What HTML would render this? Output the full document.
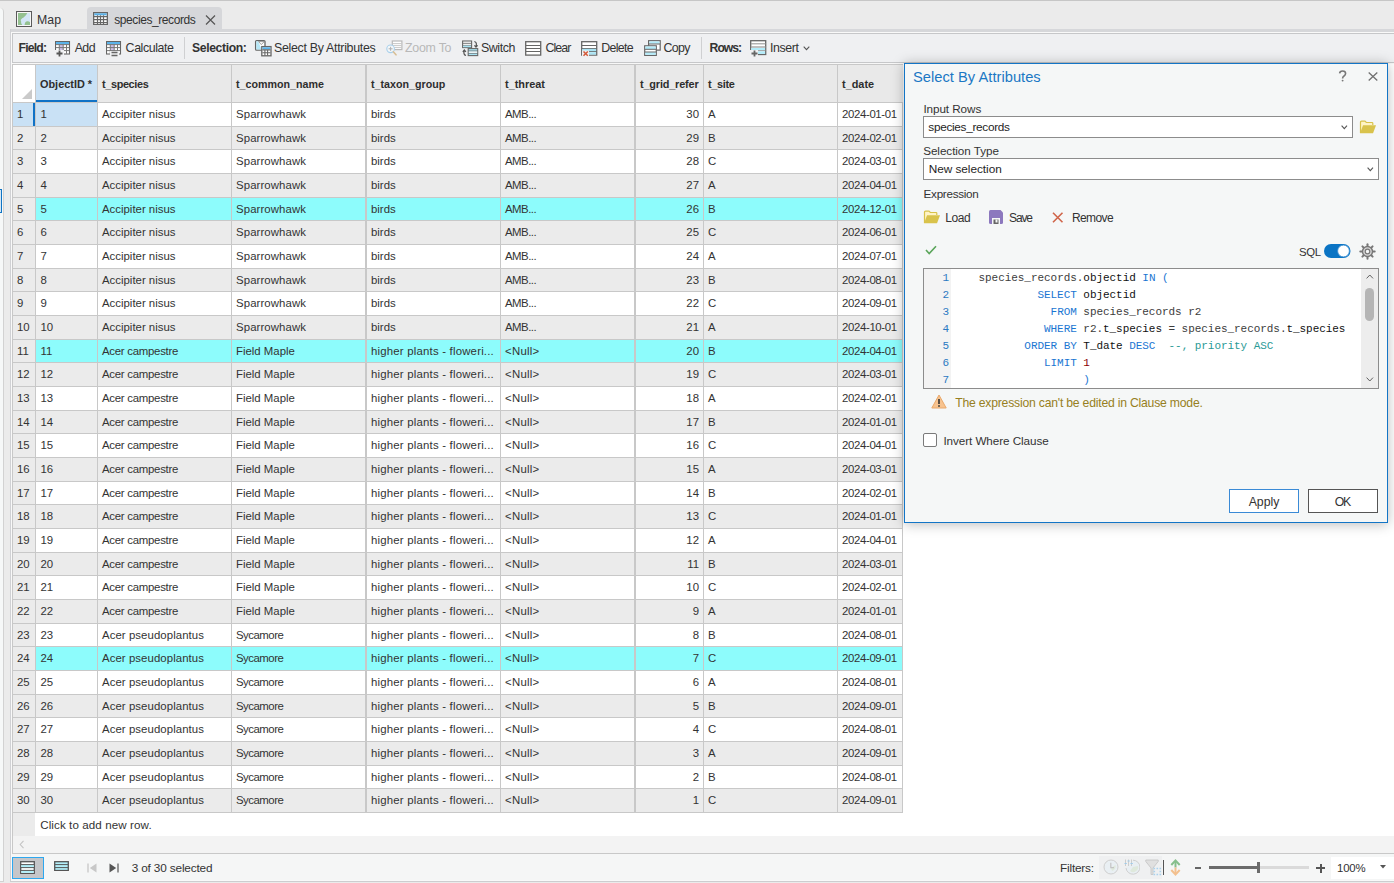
<!DOCTYPE html><html><head><meta charset="utf-8"><style>html,body{margin:0;padding:0;}body{width:1394px;height:883px;overflow:hidden;position:relative;background:#ebebeb;font-family:"Liberation Sans",sans-serif;}</style></head><body>
<div style="position:absolute;left:0px;top:0px;width:1394px;height:1px;background:#c6c6c6"></div>
<div style="position:absolute;left:0px;top:8px;width:3px;height:873px;background:#f6f8f8;border-right:1px solid #d2d2d2;border-bottom:1px solid #d2d2d2;border-top-right-radius:4px"></div>
<div style="position:absolute;left:-3px;top:189px;width:3px;height:22px;background:#d4e6f5;border:1px solid #0f74c4"></div>
<svg style="position:absolute;left:16px;top:11px" width="16" height="16" viewBox="0 0 16 16"><rect x="0.5" y="0.5" width="15" height="15" fill="#fff" stroke="#5a5a5a" stroke-width="1.1"/><rect x="2" y="2" width="12" height="12" fill="#d3e6f6"/><path d="M2 2 H11.2 C10.6 3.6 9.8 4.6 8.6 5.6 C7.6 6.6 6.8 7 6 7.6 C5.2 8.2 4.6 8.8 4.8 9.6 C5.4 10.6 5 11.4 5.2 12.2 L6.2 14 H2 Z" fill="#94c190"/><path d="M8.6 14 C8.8 12.4 9.2 10.6 11 10.3 C12.4 10.1 13.4 10.6 14 11.2 V14 Z" fill="#94c190"/></svg>
<div style="position:absolute;left:37.0px;top:14.19px;font-family:'Liberation Sans', sans-serif;font-size:12.3px;line-height:1;font-weight:400;color:#333;white-space:pre;letter-spacing:0.038px">Map</div>
<div style="position:absolute;left:87px;top:7px;width:135px;height:22px;background:#d6d7da;border-radius:4px 4px 0 0"></div>
<svg style="position:absolute;left:93px;top:12px" width="15" height="13" viewBox="0 0 15 13"><rect x="0.65" y="0.65" width="13.7" height="12" fill="#fff" stroke="#666" stroke-width="1.3"/><rect x="1.3" y="1.3" width="12.4" height="2" fill="#5ab0e6"/><line x1="1" y1="4.6" x2="14" y2="4.6" stroke="#666" stroke-width="1.2"/><line x1="1" y1="7.6" x2="14" y2="7.6" stroke="#666" stroke-width="1.2"/><line x1="1" y1="10.6" x2="14" y2="10.6" stroke="#666" stroke-width="1.2"/><line x1="4.5" y1="3.3" x2="4.5" y2="12.5" stroke="#666" stroke-width="1.2"/><line x1="7.5" y1="3.3" x2="7.5" y2="12.5" stroke="#666" stroke-width="1.2"/><line x1="10.5" y1="3.3" x2="10.5" y2="12.5" stroke="#666" stroke-width="1.2"/></svg>
<div style="position:absolute;left:114.2px;top:14.14px;font-family:'Liberation Sans', sans-serif;font-size:12px;line-height:1;font-weight:400;color:#333;white-space:pre;letter-spacing:-0.412px">species_records</div>
<svg style="position:absolute;left:205px;top:15px" width="11" height="10" viewBox="0 0 11 10"><path d="M1 0.5 L10 9.5 M10 0.5 L1 9.5" stroke="#555" stroke-width="1.2"/></svg>
<div style="position:absolute;left:10px;top:29px;width:1384px;height:3px;background:#d6d7da"></div>
<div style="position:absolute;left:10px;top:29px;width:1px;height:853px;background:#d0d1d4"></div>
<div style="position:absolute;left:11px;top:32px;width:1383px;height:849px;background:#f9f9f9"></div>
<div style="position:absolute;left:10px;top:881px;width:1384px;height:1px;background:#cdcdcf"></div>
<div style="position:absolute;left:12px;top:33px;width:1382px;height:28px;background:#eff0f2;border-top:1px solid #c6c7c9;border-bottom:1px solid #c6c7c9;border-left:1px solid #c6c7c9"></div>
<div style="position:absolute;left:18.5px;top:42.07px;font-family:'Liberation Sans', sans-serif;font-size:12.2px;line-height:1;font-weight:700;color:#333;white-space:pre;letter-spacing:-0.787px">Field:</div>
<svg style="position:absolute;left:55px;top:41px" width="16" height="16" viewBox="0 0 16 16"><rect x="0.5" y="0.5" width="14" height="12.5" fill="#fff" stroke="#666" stroke-width="1.1"/><rect x="1" y="1" width="13" height="2.3" fill="#5cb3ea"/><rect x="4.5" y="3.5" width="3.5" height="9" fill="#cdbfe8"/><line x1="1" y1="3.6" x2="14" y2="3.6" stroke="#777" stroke-width="1"/><line x1="1" y1="6.6" x2="14" y2="6.6" stroke="#777" stroke-width="1"/><line x1="1" y1="9.6" x2="14" y2="9.6" stroke="#777" stroke-width="1"/><line x1="4.3" y1="3.3" x2="4.3" y2="12.8" stroke="#777" stroke-width="1"/><line x1="8.2" y1="3.3" x2="8.2" y2="12.8" stroke="#777" stroke-width="1"/><line x1="11.5" y1="3.3" x2="11.5" y2="12.8" stroke="#777" stroke-width="1"/><rect x="0" y="9" width="9" height="7" fill="#eff0f2"/><path d="M4.5 9.5 V15.5 M1.5 12.5 H7.5" stroke="#555" stroke-width="1.8"/></svg>
<div style="position:absolute;left:74.7px;top:41.90px;font-family:'Liberation Sans', sans-serif;font-size:12.4px;line-height:1;font-weight:400;color:#333;white-space:pre;letter-spacing:-0.580px">Add</div>
<svg style="position:absolute;left:106px;top:41px" width="16" height="16" viewBox="0 0 16 16"><rect x="0.5" y="0.5" width="14" height="12.5" fill="#fff" stroke="#666" stroke-width="1.1"/><rect x="1" y="1" width="13" height="2.3" fill="#5cb3ea"/><rect x="4.5" y="3.5" width="3.5" height="9" fill="#cdbfe8"/><line x1="1" y1="3.6" x2="14" y2="3.6" stroke="#777" stroke-width="1"/><line x1="1" y1="6.6" x2="14" y2="6.6" stroke="#777" stroke-width="1"/><line x1="1" y1="9.6" x2="14" y2="9.6" stroke="#777" stroke-width="1"/><line x1="4.3" y1="3.3" x2="4.3" y2="12.8" stroke="#777" stroke-width="1"/><line x1="8.2" y1="3.3" x2="8.2" y2="12.8" stroke="#777" stroke-width="1"/><line x1="11.5" y1="3.3" x2="11.5" y2="12.8" stroke="#777" stroke-width="1"/><rect x="4" y="10" width="9" height="6" fill="#eff0f2"/><path d="M5.5 11.5 H11.5 M5.5 14.5 H11.5" stroke="#666" stroke-width="1.4"/></svg>
<div style="position:absolute;left:125.6px;top:41.90px;font-family:'Liberation Sans', sans-serif;font-size:12.4px;line-height:1;font-weight:400;color:#333;white-space:pre;letter-spacing:-0.412px">Calculate</div>
<div style="position:absolute;left:184px;top:37px;width:1px;height:22px;background:#cfd0d2"></div>
<div style="position:absolute;left:192.0px;top:42.07px;font-family:'Liberation Sans', sans-serif;font-size:12.2px;line-height:1;font-weight:700;color:#333;white-space:pre;letter-spacing:-0.378px">Selection:</div>
<svg style="position:absolute;left:254px;top:39px" width="18" height="18" viewBox="0 0 18 18"><rect x="1.6" y="1.6" width="9.4" height="9.6" rx="1" fill="#fff" stroke="#666" stroke-width="1.3"/><path d="M2.3 2.3 H4.2 L7.6 10.5 H2.3 Z" fill="#b6e7f7"/><path d="M4.6 2.6 H10.2 L7.3 5.6 Z" fill="#fff" stroke="#888" stroke-width="0.8"/><rect x="7.8" y="7.6" width="9.2" height="9.2" fill="#fff" stroke="#666" stroke-width="1.3"/><rect x="8.45" y="8.25" width="7.9" height="2" fill="#5cb3ea"/><path d="M8.4 10.9 H16.4 M8.4 13.7 H16.4 M10.9 10.5 V16.5 M13.6 10.5 V16.5" stroke="#666" stroke-width="1.1"/></svg>
<div style="position:absolute;left:274.0px;top:41.90px;font-family:'Liberation Sans', sans-serif;font-size:12.4px;line-height:1;font-weight:400;color:#333;white-space:pre;letter-spacing:-0.301px">Select By Attributes</div>
<svg style="position:absolute;left:386px;top:40px" width="17" height="17" viewBox="0 0 17 17"><rect x="6.3" y="1" width="9.6" height="8.6" fill="#fff" stroke="#b9b9b9" stroke-width="1.2"/><path d="M7 3.6 H15.5 M7 5.6 H15.5 M7 7.6 H15.5" stroke="#c2c2c2" stroke-width="0.9"/><circle cx="4.6" cy="8.8" r="3.8" fill="#f4f7f9" stroke="#a8d0ec" stroke-width="1.1"/><path d="M2.6 8.8 H6.6 M4.6 6.8 V10.8" stroke="#b0b0b0" stroke-width="1"/><path d="M7.3 11.8 L10 14.8" stroke="#d8bf96" stroke-width="1.6" stroke-linecap="round"/></svg>
<div style="position:absolute;left:405.0px;top:41.90px;font-family:'Liberation Sans', sans-serif;font-size:12.4px;line-height:1;font-weight:400;color:#b8b8b8;white-space:pre;letter-spacing:-0.252px">Zoom To</div>
<svg style="position:absolute;left:462px;top:40px" width="17" height="17" viewBox="0 0 17 17"><rect x="0.6" y="1" width="9" height="6.6" fill="#fff" stroke="#666" stroke-width="1.1"/><path d="M1 3.3 H9.3 M1 5.4 H9.3" stroke="#666" stroke-width="0.9"/><rect x="1.2" y="5.6" width="7.8" height="1.6" fill="#a9e3f3"/><rect x="6.2" y="8.6" width="9.5" height="7" fill="#a9e3f3" stroke="#666" stroke-width="1.1"/><path d="M6.5 11 H15.5 M6.5 13.2 H15.5" stroke="#666" stroke-width="0.9"/><rect x="6.8" y="11.5" width="8.4" height="1.3" fill="#fff"/><path d="M12.3 1.5 C14.5 2 14.8 4 14 6.5 M12.4 5.3 L14 7 L15.6 5.3" stroke="#555" stroke-width="1.2" fill="none"/><path d="M4 15.5 C1.8 15 1.5 13 2.3 10.5 M0.8 11.8 L2.3 10 L3.9 11.8" stroke="#555" stroke-width="1.2" fill="none"/></svg>
<div style="position:absolute;left:481.0px;top:41.90px;font-family:'Liberation Sans', sans-serif;font-size:12.4px;line-height:1;font-weight:400;color:#333;white-space:pre;letter-spacing:-0.444px">Switch</div>
<svg style="position:absolute;left:525px;top:41px" width="17" height="15" viewBox="0 0 17 15"><rect x="0.7" y="0.7" width="15" height="13.4" fill="#fff" stroke="#666" stroke-width="1.3"/><path d="M1 4.5 H15.5 M1 7.5 H15.5 M1 10.5 H15.5" stroke="#666" stroke-width="1"/></svg>
<div style="position:absolute;left:545.4px;top:41.90px;font-family:'Liberation Sans', sans-serif;font-size:12.4px;line-height:1;font-weight:400;color:#333;white-space:pre;letter-spacing:-0.884px">Clear</div>
<svg style="position:absolute;left:581px;top:41px" width="17" height="16" viewBox="0 0 17 16"><rect x="0.7" y="0.7" width="15" height="13.4" fill="#fff" stroke="#666" stroke-width="1.3"/><path d="M1 4.5 H15.5 M1 7.5 H15.5 M1 10.5 H15.5" stroke="#666" stroke-width="1"/><rect x="1.3" y="7.8" width="13.8" height="2.4" fill="#a9e3f3"/><rect x="1.3" y="11.2" width="13.8" height="2.4" fill="#a9e3f3"/><rect x="1" y="9.5" width="7" height="6.5" fill="#eff0f2"/><path d="M2.5 10.5 L6.8 14.8 M6.8 10.5 L2.5 14.8" stroke="#d45a3a" stroke-width="1.5"/></svg>
<div style="position:absolute;left:601.2px;top:41.90px;font-family:'Liberation Sans', sans-serif;font-size:12.4px;line-height:1;font-weight:400;color:#333;white-space:pre;letter-spacing:-0.670px">Delete</div>
<svg style="position:absolute;left:644px;top:40px" width="17" height="17" viewBox="0 0 17 17"><rect x="4.6" y="0.7" width="11.6" height="9.4" fill="#fff" stroke="#666" stroke-width="1.2"/><rect x="5.3" y="1.4" width="10.2" height="2.3" fill="#b3ecfa"/><path d="M5 4 H16" stroke="#666" stroke-width="1"/><rect x="0.7" y="5.8" width="11.6" height="9.6" fill="#fff" stroke="#666" stroke-width="1.2"/><rect x="1.3" y="6.5" width="10.4" height="2.6" fill="#b3ecfa"/><rect x="1.3" y="12.2" width="10.4" height="2.6" fill="#b3ecfa"/><path d="M1 9.3 H12 M1 12 H12" stroke="#666" stroke-width="1"/></svg>
<div style="position:absolute;left:663.5px;top:41.90px;font-family:'Liberation Sans', sans-serif;font-size:12.4px;line-height:1;font-weight:400;color:#333;white-space:pre;letter-spacing:-0.681px">Copy</div>
<div style="position:absolute;left:701px;top:37px;width:1px;height:22px;background:#cfd0d2"></div>
<div style="position:absolute;left:709.6px;top:42.07px;font-family:'Liberation Sans', sans-serif;font-size:12.2px;line-height:1;font-weight:700;color:#333;white-space:pre;letter-spacing:-1.000px">Rows:</div>
<svg style="position:absolute;left:750px;top:40px" width="17" height="17" viewBox="0 0 17 17"><rect x="0.7" y="0.7" width="15" height="13.8" fill="#fff" stroke="#666" stroke-width="1.3"/><path d="M1 3.8 H15.5" stroke="#999" stroke-width="1.1"/><path d="M1 7 H15.5" stroke="#a4a4a4" stroke-width="1.4"/><rect x="1.3" y="8" width="13.8" height="2.3" fill="#b3ecfa"/><path d="M1 10.7 H15.5" stroke="#999" stroke-width="1"/><rect x="1.3" y="11.3" width="13.8" height="2.6" fill="#b3ecfa"/><rect x="0" y="10" width="8" height="7" fill="#eff0f2"/><path d="M4.5 10.5 V16.5 M1.5 13.5 H7.5" stroke="#666" stroke-width="1.8"/></svg>
<div style="position:absolute;left:770.1px;top:42.30px;font-family:'Liberation Sans', sans-serif;font-size:12.4px;line-height:1;font-weight:400;color:#333;white-space:pre;letter-spacing:-0.422px">Insert</div>
<svg style="position:absolute;left:803px;top:46px" width="7" height="5" viewBox="0 0 7 5"><path d="M0.7 0.7 L3.5 3.6 L6.3 0.7" stroke="#555" stroke-width="1.1" fill="none"/></svg>
<div style="position:absolute;left:12px;top:63px;width:1382px;height:1px;background:#f7f7f7"></div>
<div style="position:absolute;left:12px;top:64px;width:1382px;height:789px;background:#fff"></div>
<div style="position:absolute;left:12px;top:64px;width:1px;height:790px;background:#c8c8c8"></div>
<div style="position:absolute;left:12px;top:64px;width:891px;height:1px;background:#c8c8c8"></div>
<div style="position:absolute;left:13px;top:65px;width:890px;height:37px;background:#e9e9e9"></div>
<div style="position:absolute;left:13px;top:65px;width:22px;height:37px;background:#fff"></div>
<svg style="position:absolute;left:22px;top:89px" width="11" height="11" viewBox="0 0 11 11"><path d="M10 0 L10 10 L0 10 Z" fill="#cacaca"/></svg>
<div style="position:absolute;left:36px;top:65px;width:61px;height:37px;background:#c9e1f5"></div>
<div style="position:absolute;left:36px;top:100px;width:61px;height:2px;background:#1072c6"></div>
<div style="position:absolute;left:40px;top:79.17px;font-family:'Liberation Sans', sans-serif;font-size:10.9px;line-height:1;font-weight:700;color:#2e2e2e;white-space:pre;">ObjectID *</div>
<div style="position:absolute;left:102px;top:79.17px;font-family:'Liberation Sans', sans-serif;font-size:10.9px;line-height:1;font-weight:700;color:#2e2e2e;white-space:pre;letter-spacing:-0.37px">t_species</div>
<div style="position:absolute;left:236px;top:79.34px;font-family:'Liberation Sans', sans-serif;font-size:10.7px;line-height:1;font-weight:700;color:#2e2e2e;white-space:pre;">t_common_name</div>
<div style="position:absolute;left:371px;top:79.34px;font-family:'Liberation Sans', sans-serif;font-size:10.7px;line-height:1;font-weight:700;color:#2e2e2e;white-space:pre;">t_taxon_group</div>
<div style="position:absolute;left:505px;top:79.17px;font-family:'Liberation Sans', sans-serif;font-size:10.9px;line-height:1;font-weight:700;color:#2e2e2e;white-space:pre;">t_threat</div>
<div style="position:absolute;left:640px;top:79.17px;font-family:'Liberation Sans', sans-serif;font-size:10.9px;line-height:1;font-weight:700;color:#2e2e2e;white-space:pre;letter-spacing:-0.17px">t_grid_refer</div>
<div style="position:absolute;left:708px;top:79.17px;font-family:'Liberation Sans', sans-serif;font-size:10.9px;line-height:1;font-weight:700;color:#2e2e2e;white-space:pre;letter-spacing:-0.32px">t_site</div>
<div style="position:absolute;left:842px;top:79.17px;font-family:'Liberation Sans', sans-serif;font-size:10.9px;line-height:1;font-weight:700;color:#2e2e2e;white-space:pre;">t_date</div>
<div style="position:absolute;left:13px;top:102px;width:890px;height:1px;background:#c8c8c8"></div>
<div style="position:absolute;left:36px;top:103px;width:867px;height:23px;background:#fff"></div>
<div style="position:absolute;left:13px;top:103px;width:22px;height:23px;background:#c9e1f5"></div>
<div style="position:absolute;left:33px;top:103px;width:2px;height:23px;background:#1072c6"></div>
<div style="position:absolute;left:36px;top:103px;width:61px;height:23px;background:#c9e1f5"></div>
<div style="position:absolute;left:13px;top:126px;width:890px;height:1px;background:#c8c8c8"></div>
<div style="position:absolute;left:17px;top:108.75px;font-family:'Liberation Sans', sans-serif;font-size:11.4px;line-height:1;font-weight:400;color:#333;white-space:pre;">1</div>
<div style="position:absolute;left:40.5px;top:108.75px;font-family:'Liberation Sans', sans-serif;font-size:11.4px;line-height:1;font-weight:400;color:#333;white-space:pre;">1</div>
<div style="position:absolute;left:102px;top:108.75px;font-family:'Liberation Sans', sans-serif;font-size:11.4px;line-height:1;font-weight:400;color:#333;white-space:pre;letter-spacing:0px">Accipiter nisus</div>
<div style="position:absolute;left:236px;top:108.75px;font-family:'Liberation Sans', sans-serif;font-size:11.4px;line-height:1;font-weight:400;color:#333;white-space:pre;letter-spacing:0.1px">Sparrowhawk</div>
<div style="position:absolute;left:371px;top:108.75px;font-family:'Liberation Sans', sans-serif;font-size:11.4px;line-height:1;font-weight:400;color:#333;white-space:pre;letter-spacing:0px">birds</div>
<div style="position:absolute;left:505px;top:108.75px;font-family:'Liberation Sans', sans-serif;font-size:11.4px;line-height:1;font-weight:400;color:#333;white-space:pre;letter-spacing:-0.5px">AMB...</div>
<div style="position:absolute;right:695px;top:108.75px;font-family:'Liberation Sans', sans-serif;font-size:11.4px;line-height:1;font-weight:400;color:#333;white-space:pre;text-align:right;">30</div>
<div style="position:absolute;left:708px;top:108.75px;font-family:'Liberation Sans', sans-serif;font-size:11.4px;line-height:1;font-weight:400;color:#333;white-space:pre;">A</div>
<div style="position:absolute;left:842px;top:108.75px;font-family:'Liberation Sans', sans-serif;font-size:11.4px;line-height:1;font-weight:400;color:#333;white-space:pre;letter-spacing:-0.35px">2024-01-01</div>
<div style="position:absolute;left:36px;top:127px;width:867px;height:22px;background:#ebebeb"></div>
<div style="position:absolute;left:13px;top:127px;width:22px;height:22px;background:#ebebeb"></div>
<div style="position:absolute;left:13px;top:149px;width:890px;height:1px;background:#c8c8c8"></div>
<div style="position:absolute;left:17px;top:132.75px;font-family:'Liberation Sans', sans-serif;font-size:11.4px;line-height:1;font-weight:400;color:#333;white-space:pre;">2</div>
<div style="position:absolute;left:40.5px;top:132.75px;font-family:'Liberation Sans', sans-serif;font-size:11.4px;line-height:1;font-weight:400;color:#333;white-space:pre;">2</div>
<div style="position:absolute;left:102px;top:132.75px;font-family:'Liberation Sans', sans-serif;font-size:11.4px;line-height:1;font-weight:400;color:#333;white-space:pre;letter-spacing:0px">Accipiter nisus</div>
<div style="position:absolute;left:236px;top:132.75px;font-family:'Liberation Sans', sans-serif;font-size:11.4px;line-height:1;font-weight:400;color:#333;white-space:pre;letter-spacing:0.1px">Sparrowhawk</div>
<div style="position:absolute;left:371px;top:132.75px;font-family:'Liberation Sans', sans-serif;font-size:11.4px;line-height:1;font-weight:400;color:#333;white-space:pre;letter-spacing:0px">birds</div>
<div style="position:absolute;left:505px;top:132.75px;font-family:'Liberation Sans', sans-serif;font-size:11.4px;line-height:1;font-weight:400;color:#333;white-space:pre;letter-spacing:-0.5px">AMB...</div>
<div style="position:absolute;right:695px;top:132.75px;font-family:'Liberation Sans', sans-serif;font-size:11.4px;line-height:1;font-weight:400;color:#333;white-space:pre;text-align:right;">29</div>
<div style="position:absolute;left:708px;top:132.75px;font-family:'Liberation Sans', sans-serif;font-size:11.4px;line-height:1;font-weight:400;color:#333;white-space:pre;">B</div>
<div style="position:absolute;left:842px;top:132.75px;font-family:'Liberation Sans', sans-serif;font-size:11.4px;line-height:1;font-weight:400;color:#333;white-space:pre;letter-spacing:-0.35px">2024-02-01</div>
<div style="position:absolute;left:36px;top:150px;width:867px;height:23px;background:#fff"></div>
<div style="position:absolute;left:13px;top:150px;width:22px;height:23px;background:#ebebeb"></div>
<div style="position:absolute;left:13px;top:173px;width:890px;height:1px;background:#c8c8c8"></div>
<div style="position:absolute;left:17px;top:155.75px;font-family:'Liberation Sans', sans-serif;font-size:11.4px;line-height:1;font-weight:400;color:#333;white-space:pre;">3</div>
<div style="position:absolute;left:40.5px;top:155.75px;font-family:'Liberation Sans', sans-serif;font-size:11.4px;line-height:1;font-weight:400;color:#333;white-space:pre;">3</div>
<div style="position:absolute;left:102px;top:155.75px;font-family:'Liberation Sans', sans-serif;font-size:11.4px;line-height:1;font-weight:400;color:#333;white-space:pre;letter-spacing:0px">Accipiter nisus</div>
<div style="position:absolute;left:236px;top:155.75px;font-family:'Liberation Sans', sans-serif;font-size:11.4px;line-height:1;font-weight:400;color:#333;white-space:pre;letter-spacing:0.1px">Sparrowhawk</div>
<div style="position:absolute;left:371px;top:155.75px;font-family:'Liberation Sans', sans-serif;font-size:11.4px;line-height:1;font-weight:400;color:#333;white-space:pre;letter-spacing:0px">birds</div>
<div style="position:absolute;left:505px;top:155.75px;font-family:'Liberation Sans', sans-serif;font-size:11.4px;line-height:1;font-weight:400;color:#333;white-space:pre;letter-spacing:-0.5px">AMB...</div>
<div style="position:absolute;right:695px;top:155.75px;font-family:'Liberation Sans', sans-serif;font-size:11.4px;line-height:1;font-weight:400;color:#333;white-space:pre;text-align:right;">28</div>
<div style="position:absolute;left:708px;top:155.75px;font-family:'Liberation Sans', sans-serif;font-size:11.4px;line-height:1;font-weight:400;color:#333;white-space:pre;">C</div>
<div style="position:absolute;left:842px;top:155.75px;font-family:'Liberation Sans', sans-serif;font-size:11.4px;line-height:1;font-weight:400;color:#333;white-space:pre;letter-spacing:-0.35px">2024-03-01</div>
<div style="position:absolute;left:36px;top:174px;width:867px;height:23px;background:#ebebeb"></div>
<div style="position:absolute;left:13px;top:174px;width:22px;height:23px;background:#ebebeb"></div>
<div style="position:absolute;left:13px;top:197px;width:890px;height:1px;background:#c8c8c8"></div>
<div style="position:absolute;left:17px;top:179.75px;font-family:'Liberation Sans', sans-serif;font-size:11.4px;line-height:1;font-weight:400;color:#333;white-space:pre;">4</div>
<div style="position:absolute;left:40.5px;top:179.75px;font-family:'Liberation Sans', sans-serif;font-size:11.4px;line-height:1;font-weight:400;color:#333;white-space:pre;">4</div>
<div style="position:absolute;left:102px;top:179.75px;font-family:'Liberation Sans', sans-serif;font-size:11.4px;line-height:1;font-weight:400;color:#333;white-space:pre;letter-spacing:0px">Accipiter nisus</div>
<div style="position:absolute;left:236px;top:179.75px;font-family:'Liberation Sans', sans-serif;font-size:11.4px;line-height:1;font-weight:400;color:#333;white-space:pre;letter-spacing:0.1px">Sparrowhawk</div>
<div style="position:absolute;left:371px;top:179.75px;font-family:'Liberation Sans', sans-serif;font-size:11.4px;line-height:1;font-weight:400;color:#333;white-space:pre;letter-spacing:0px">birds</div>
<div style="position:absolute;left:505px;top:179.75px;font-family:'Liberation Sans', sans-serif;font-size:11.4px;line-height:1;font-weight:400;color:#333;white-space:pre;letter-spacing:-0.5px">AMB...</div>
<div style="position:absolute;right:695px;top:179.75px;font-family:'Liberation Sans', sans-serif;font-size:11.4px;line-height:1;font-weight:400;color:#333;white-space:pre;text-align:right;">27</div>
<div style="position:absolute;left:708px;top:179.75px;font-family:'Liberation Sans', sans-serif;font-size:11.4px;line-height:1;font-weight:400;color:#333;white-space:pre;">A</div>
<div style="position:absolute;left:842px;top:179.75px;font-family:'Liberation Sans', sans-serif;font-size:11.4px;line-height:1;font-weight:400;color:#333;white-space:pre;letter-spacing:-0.35px">2024-04-01</div>
<div style="position:absolute;left:36px;top:198px;width:867px;height:22px;background:#8dfcfc"></div>
<div style="position:absolute;left:13px;top:198px;width:22px;height:22px;background:#ebebeb"></div>
<div style="position:absolute;left:13px;top:220px;width:890px;height:1px;background:#c8c8c8"></div>
<div style="position:absolute;left:17px;top:203.75px;font-family:'Liberation Sans', sans-serif;font-size:11.4px;line-height:1;font-weight:400;color:#333;white-space:pre;">5</div>
<div style="position:absolute;left:40.5px;top:203.75px;font-family:'Liberation Sans', sans-serif;font-size:11.4px;line-height:1;font-weight:400;color:#333;white-space:pre;">5</div>
<div style="position:absolute;left:102px;top:203.75px;font-family:'Liberation Sans', sans-serif;font-size:11.4px;line-height:1;font-weight:400;color:#333;white-space:pre;letter-spacing:0px">Accipiter nisus</div>
<div style="position:absolute;left:236px;top:203.75px;font-family:'Liberation Sans', sans-serif;font-size:11.4px;line-height:1;font-weight:400;color:#333;white-space:pre;letter-spacing:0.1px">Sparrowhawk</div>
<div style="position:absolute;left:371px;top:203.75px;font-family:'Liberation Sans', sans-serif;font-size:11.4px;line-height:1;font-weight:400;color:#333;white-space:pre;letter-spacing:0px">birds</div>
<div style="position:absolute;left:505px;top:203.75px;font-family:'Liberation Sans', sans-serif;font-size:11.4px;line-height:1;font-weight:400;color:#333;white-space:pre;letter-spacing:-0.5px">AMB...</div>
<div style="position:absolute;right:695px;top:203.75px;font-family:'Liberation Sans', sans-serif;font-size:11.4px;line-height:1;font-weight:400;color:#333;white-space:pre;text-align:right;">26</div>
<div style="position:absolute;left:708px;top:203.75px;font-family:'Liberation Sans', sans-serif;font-size:11.4px;line-height:1;font-weight:400;color:#333;white-space:pre;">B</div>
<div style="position:absolute;left:842px;top:203.75px;font-family:'Liberation Sans', sans-serif;font-size:11.4px;line-height:1;font-weight:400;color:#333;white-space:pre;letter-spacing:-0.35px">2024-12-01</div>
<div style="position:absolute;left:36px;top:221px;width:867px;height:23px;background:#ebebeb"></div>
<div style="position:absolute;left:13px;top:221px;width:22px;height:23px;background:#ebebeb"></div>
<div style="position:absolute;left:13px;top:244px;width:890px;height:1px;background:#c8c8c8"></div>
<div style="position:absolute;left:17px;top:226.75px;font-family:'Liberation Sans', sans-serif;font-size:11.4px;line-height:1;font-weight:400;color:#333;white-space:pre;">6</div>
<div style="position:absolute;left:40.5px;top:226.75px;font-family:'Liberation Sans', sans-serif;font-size:11.4px;line-height:1;font-weight:400;color:#333;white-space:pre;">6</div>
<div style="position:absolute;left:102px;top:226.75px;font-family:'Liberation Sans', sans-serif;font-size:11.4px;line-height:1;font-weight:400;color:#333;white-space:pre;letter-spacing:0px">Accipiter nisus</div>
<div style="position:absolute;left:236px;top:226.75px;font-family:'Liberation Sans', sans-serif;font-size:11.4px;line-height:1;font-weight:400;color:#333;white-space:pre;letter-spacing:0.1px">Sparrowhawk</div>
<div style="position:absolute;left:371px;top:226.75px;font-family:'Liberation Sans', sans-serif;font-size:11.4px;line-height:1;font-weight:400;color:#333;white-space:pre;letter-spacing:0px">birds</div>
<div style="position:absolute;left:505px;top:226.75px;font-family:'Liberation Sans', sans-serif;font-size:11.4px;line-height:1;font-weight:400;color:#333;white-space:pre;letter-spacing:-0.5px">AMB...</div>
<div style="position:absolute;right:695px;top:226.75px;font-family:'Liberation Sans', sans-serif;font-size:11.4px;line-height:1;font-weight:400;color:#333;white-space:pre;text-align:right;">25</div>
<div style="position:absolute;left:708px;top:226.75px;font-family:'Liberation Sans', sans-serif;font-size:11.4px;line-height:1;font-weight:400;color:#333;white-space:pre;">C</div>
<div style="position:absolute;left:842px;top:226.75px;font-family:'Liberation Sans', sans-serif;font-size:11.4px;line-height:1;font-weight:400;color:#333;white-space:pre;letter-spacing:-0.35px">2024-06-01</div>
<div style="position:absolute;left:36px;top:245px;width:867px;height:23px;background:#fff"></div>
<div style="position:absolute;left:13px;top:245px;width:22px;height:23px;background:#ebebeb"></div>
<div style="position:absolute;left:13px;top:268px;width:890px;height:1px;background:#c8c8c8"></div>
<div style="position:absolute;left:17px;top:250.75px;font-family:'Liberation Sans', sans-serif;font-size:11.4px;line-height:1;font-weight:400;color:#333;white-space:pre;">7</div>
<div style="position:absolute;left:40.5px;top:250.75px;font-family:'Liberation Sans', sans-serif;font-size:11.4px;line-height:1;font-weight:400;color:#333;white-space:pre;">7</div>
<div style="position:absolute;left:102px;top:250.75px;font-family:'Liberation Sans', sans-serif;font-size:11.4px;line-height:1;font-weight:400;color:#333;white-space:pre;letter-spacing:0px">Accipiter nisus</div>
<div style="position:absolute;left:236px;top:250.75px;font-family:'Liberation Sans', sans-serif;font-size:11.4px;line-height:1;font-weight:400;color:#333;white-space:pre;letter-spacing:0.1px">Sparrowhawk</div>
<div style="position:absolute;left:371px;top:250.75px;font-family:'Liberation Sans', sans-serif;font-size:11.4px;line-height:1;font-weight:400;color:#333;white-space:pre;letter-spacing:0px">birds</div>
<div style="position:absolute;left:505px;top:250.75px;font-family:'Liberation Sans', sans-serif;font-size:11.4px;line-height:1;font-weight:400;color:#333;white-space:pre;letter-spacing:-0.5px">AMB...</div>
<div style="position:absolute;right:695px;top:250.75px;font-family:'Liberation Sans', sans-serif;font-size:11.4px;line-height:1;font-weight:400;color:#333;white-space:pre;text-align:right;">24</div>
<div style="position:absolute;left:708px;top:250.75px;font-family:'Liberation Sans', sans-serif;font-size:11.4px;line-height:1;font-weight:400;color:#333;white-space:pre;">A</div>
<div style="position:absolute;left:842px;top:250.75px;font-family:'Liberation Sans', sans-serif;font-size:11.4px;line-height:1;font-weight:400;color:#333;white-space:pre;letter-spacing:-0.35px">2024-07-01</div>
<div style="position:absolute;left:36px;top:269px;width:867px;height:22px;background:#ebebeb"></div>
<div style="position:absolute;left:13px;top:269px;width:22px;height:22px;background:#ebebeb"></div>
<div style="position:absolute;left:13px;top:291px;width:890px;height:1px;background:#c8c8c8"></div>
<div style="position:absolute;left:17px;top:274.75px;font-family:'Liberation Sans', sans-serif;font-size:11.4px;line-height:1;font-weight:400;color:#333;white-space:pre;">8</div>
<div style="position:absolute;left:40.5px;top:274.75px;font-family:'Liberation Sans', sans-serif;font-size:11.4px;line-height:1;font-weight:400;color:#333;white-space:pre;">8</div>
<div style="position:absolute;left:102px;top:274.75px;font-family:'Liberation Sans', sans-serif;font-size:11.4px;line-height:1;font-weight:400;color:#333;white-space:pre;letter-spacing:0px">Accipiter nisus</div>
<div style="position:absolute;left:236px;top:274.75px;font-family:'Liberation Sans', sans-serif;font-size:11.4px;line-height:1;font-weight:400;color:#333;white-space:pre;letter-spacing:0.1px">Sparrowhawk</div>
<div style="position:absolute;left:371px;top:274.75px;font-family:'Liberation Sans', sans-serif;font-size:11.4px;line-height:1;font-weight:400;color:#333;white-space:pre;letter-spacing:0px">birds</div>
<div style="position:absolute;left:505px;top:274.75px;font-family:'Liberation Sans', sans-serif;font-size:11.4px;line-height:1;font-weight:400;color:#333;white-space:pre;letter-spacing:-0.5px">AMB...</div>
<div style="position:absolute;right:695px;top:274.75px;font-family:'Liberation Sans', sans-serif;font-size:11.4px;line-height:1;font-weight:400;color:#333;white-space:pre;text-align:right;">23</div>
<div style="position:absolute;left:708px;top:274.75px;font-family:'Liberation Sans', sans-serif;font-size:11.4px;line-height:1;font-weight:400;color:#333;white-space:pre;">B</div>
<div style="position:absolute;left:842px;top:274.75px;font-family:'Liberation Sans', sans-serif;font-size:11.4px;line-height:1;font-weight:400;color:#333;white-space:pre;letter-spacing:-0.35px">2024-08-01</div>
<div style="position:absolute;left:36px;top:292px;width:867px;height:23px;background:#fff"></div>
<div style="position:absolute;left:13px;top:292px;width:22px;height:23px;background:#ebebeb"></div>
<div style="position:absolute;left:13px;top:315px;width:890px;height:1px;background:#c8c8c8"></div>
<div style="position:absolute;left:17px;top:297.75px;font-family:'Liberation Sans', sans-serif;font-size:11.4px;line-height:1;font-weight:400;color:#333;white-space:pre;">9</div>
<div style="position:absolute;left:40.5px;top:297.75px;font-family:'Liberation Sans', sans-serif;font-size:11.4px;line-height:1;font-weight:400;color:#333;white-space:pre;">9</div>
<div style="position:absolute;left:102px;top:297.75px;font-family:'Liberation Sans', sans-serif;font-size:11.4px;line-height:1;font-weight:400;color:#333;white-space:pre;letter-spacing:0px">Accipiter nisus</div>
<div style="position:absolute;left:236px;top:297.75px;font-family:'Liberation Sans', sans-serif;font-size:11.4px;line-height:1;font-weight:400;color:#333;white-space:pre;letter-spacing:0.1px">Sparrowhawk</div>
<div style="position:absolute;left:371px;top:297.75px;font-family:'Liberation Sans', sans-serif;font-size:11.4px;line-height:1;font-weight:400;color:#333;white-space:pre;letter-spacing:0px">birds</div>
<div style="position:absolute;left:505px;top:297.75px;font-family:'Liberation Sans', sans-serif;font-size:11.4px;line-height:1;font-weight:400;color:#333;white-space:pre;letter-spacing:-0.5px">AMB...</div>
<div style="position:absolute;right:695px;top:297.75px;font-family:'Liberation Sans', sans-serif;font-size:11.4px;line-height:1;font-weight:400;color:#333;white-space:pre;text-align:right;">22</div>
<div style="position:absolute;left:708px;top:297.75px;font-family:'Liberation Sans', sans-serif;font-size:11.4px;line-height:1;font-weight:400;color:#333;white-space:pre;">C</div>
<div style="position:absolute;left:842px;top:297.75px;font-family:'Liberation Sans', sans-serif;font-size:11.4px;line-height:1;font-weight:400;color:#333;white-space:pre;letter-spacing:-0.35px">2024-09-01</div>
<div style="position:absolute;left:36px;top:316px;width:867px;height:23px;background:#ebebeb"></div>
<div style="position:absolute;left:13px;top:316px;width:22px;height:23px;background:#ebebeb"></div>
<div style="position:absolute;left:13px;top:339px;width:890px;height:1px;background:#c8c8c8"></div>
<div style="position:absolute;left:17px;top:321.75px;font-family:'Liberation Sans', sans-serif;font-size:11.4px;line-height:1;font-weight:400;color:#333;white-space:pre;">10</div>
<div style="position:absolute;left:40.5px;top:321.75px;font-family:'Liberation Sans', sans-serif;font-size:11.4px;line-height:1;font-weight:400;color:#333;white-space:pre;">10</div>
<div style="position:absolute;left:102px;top:321.75px;font-family:'Liberation Sans', sans-serif;font-size:11.4px;line-height:1;font-weight:400;color:#333;white-space:pre;letter-spacing:0px">Accipiter nisus</div>
<div style="position:absolute;left:236px;top:321.75px;font-family:'Liberation Sans', sans-serif;font-size:11.4px;line-height:1;font-weight:400;color:#333;white-space:pre;letter-spacing:0.1px">Sparrowhawk</div>
<div style="position:absolute;left:371px;top:321.75px;font-family:'Liberation Sans', sans-serif;font-size:11.4px;line-height:1;font-weight:400;color:#333;white-space:pre;letter-spacing:0px">birds</div>
<div style="position:absolute;left:505px;top:321.75px;font-family:'Liberation Sans', sans-serif;font-size:11.4px;line-height:1;font-weight:400;color:#333;white-space:pre;letter-spacing:-0.5px">AMB...</div>
<div style="position:absolute;right:695px;top:321.75px;font-family:'Liberation Sans', sans-serif;font-size:11.4px;line-height:1;font-weight:400;color:#333;white-space:pre;text-align:right;">21</div>
<div style="position:absolute;left:708px;top:321.75px;font-family:'Liberation Sans', sans-serif;font-size:11.4px;line-height:1;font-weight:400;color:#333;white-space:pre;">A</div>
<div style="position:absolute;left:842px;top:321.75px;font-family:'Liberation Sans', sans-serif;font-size:11.4px;line-height:1;font-weight:400;color:#333;white-space:pre;letter-spacing:-0.35px">2024-10-01</div>
<div style="position:absolute;left:36px;top:340px;width:867px;height:22px;background:#8dfcfc"></div>
<div style="position:absolute;left:13px;top:340px;width:22px;height:22px;background:#ebebeb"></div>
<div style="position:absolute;left:13px;top:362px;width:890px;height:1px;background:#c8c8c8"></div>
<div style="position:absolute;left:17px;top:345.75px;font-family:'Liberation Sans', sans-serif;font-size:11.4px;line-height:1;font-weight:400;color:#333;white-space:pre;">11</div>
<div style="position:absolute;left:40.5px;top:345.75px;font-family:'Liberation Sans', sans-serif;font-size:11.4px;line-height:1;font-weight:400;color:#333;white-space:pre;">11</div>
<div style="position:absolute;left:102px;top:345.75px;font-family:'Liberation Sans', sans-serif;font-size:11.4px;line-height:1;font-weight:400;color:#333;white-space:pre;letter-spacing:-0.26px">Acer campestre</div>
<div style="position:absolute;left:236px;top:345.75px;font-family:'Liberation Sans', sans-serif;font-size:11.4px;line-height:1;font-weight:400;color:#333;white-space:pre;letter-spacing:0px">Field Maple</div>
<div style="position:absolute;left:371px;top:345.75px;font-family:'Liberation Sans', sans-serif;font-size:11.4px;line-height:1;font-weight:400;color:#333;white-space:pre;letter-spacing:0.2px">higher plants - floweri...</div>
<div style="position:absolute;left:505px;top:345.75px;font-family:'Liberation Sans', sans-serif;font-size:11.4px;line-height:1;font-weight:400;color:#333;white-space:pre;letter-spacing:0.25px">&lt;Null&gt;</div>
<div style="position:absolute;right:695px;top:345.75px;font-family:'Liberation Sans', sans-serif;font-size:11.4px;line-height:1;font-weight:400;color:#333;white-space:pre;text-align:right;">20</div>
<div style="position:absolute;left:708px;top:345.75px;font-family:'Liberation Sans', sans-serif;font-size:11.4px;line-height:1;font-weight:400;color:#333;white-space:pre;">B</div>
<div style="position:absolute;left:842px;top:345.75px;font-family:'Liberation Sans', sans-serif;font-size:11.4px;line-height:1;font-weight:400;color:#333;white-space:pre;letter-spacing:-0.35px">2024-04-01</div>
<div style="position:absolute;left:36px;top:363px;width:867px;height:23px;background:#ebebeb"></div>
<div style="position:absolute;left:13px;top:363px;width:22px;height:23px;background:#ebebeb"></div>
<div style="position:absolute;left:13px;top:386px;width:890px;height:1px;background:#c8c8c8"></div>
<div style="position:absolute;left:17px;top:368.75px;font-family:'Liberation Sans', sans-serif;font-size:11.4px;line-height:1;font-weight:400;color:#333;white-space:pre;">12</div>
<div style="position:absolute;left:40.5px;top:368.75px;font-family:'Liberation Sans', sans-serif;font-size:11.4px;line-height:1;font-weight:400;color:#333;white-space:pre;">12</div>
<div style="position:absolute;left:102px;top:368.75px;font-family:'Liberation Sans', sans-serif;font-size:11.4px;line-height:1;font-weight:400;color:#333;white-space:pre;letter-spacing:-0.26px">Acer campestre</div>
<div style="position:absolute;left:236px;top:368.75px;font-family:'Liberation Sans', sans-serif;font-size:11.4px;line-height:1;font-weight:400;color:#333;white-space:pre;letter-spacing:0px">Field Maple</div>
<div style="position:absolute;left:371px;top:368.75px;font-family:'Liberation Sans', sans-serif;font-size:11.4px;line-height:1;font-weight:400;color:#333;white-space:pre;letter-spacing:0.2px">higher plants - floweri...</div>
<div style="position:absolute;left:505px;top:368.75px;font-family:'Liberation Sans', sans-serif;font-size:11.4px;line-height:1;font-weight:400;color:#333;white-space:pre;letter-spacing:0.25px">&lt;Null&gt;</div>
<div style="position:absolute;right:695px;top:368.75px;font-family:'Liberation Sans', sans-serif;font-size:11.4px;line-height:1;font-weight:400;color:#333;white-space:pre;text-align:right;">19</div>
<div style="position:absolute;left:708px;top:368.75px;font-family:'Liberation Sans', sans-serif;font-size:11.4px;line-height:1;font-weight:400;color:#333;white-space:pre;">C</div>
<div style="position:absolute;left:842px;top:368.75px;font-family:'Liberation Sans', sans-serif;font-size:11.4px;line-height:1;font-weight:400;color:#333;white-space:pre;letter-spacing:-0.35px">2024-03-01</div>
<div style="position:absolute;left:36px;top:387px;width:867px;height:23px;background:#fff"></div>
<div style="position:absolute;left:13px;top:387px;width:22px;height:23px;background:#ebebeb"></div>
<div style="position:absolute;left:13px;top:410px;width:890px;height:1px;background:#c8c8c8"></div>
<div style="position:absolute;left:17px;top:392.75px;font-family:'Liberation Sans', sans-serif;font-size:11.4px;line-height:1;font-weight:400;color:#333;white-space:pre;">13</div>
<div style="position:absolute;left:40.5px;top:392.75px;font-family:'Liberation Sans', sans-serif;font-size:11.4px;line-height:1;font-weight:400;color:#333;white-space:pre;">13</div>
<div style="position:absolute;left:102px;top:392.75px;font-family:'Liberation Sans', sans-serif;font-size:11.4px;line-height:1;font-weight:400;color:#333;white-space:pre;letter-spacing:-0.26px">Acer campestre</div>
<div style="position:absolute;left:236px;top:392.75px;font-family:'Liberation Sans', sans-serif;font-size:11.4px;line-height:1;font-weight:400;color:#333;white-space:pre;letter-spacing:0px">Field Maple</div>
<div style="position:absolute;left:371px;top:392.75px;font-family:'Liberation Sans', sans-serif;font-size:11.4px;line-height:1;font-weight:400;color:#333;white-space:pre;letter-spacing:0.2px">higher plants - floweri...</div>
<div style="position:absolute;left:505px;top:392.75px;font-family:'Liberation Sans', sans-serif;font-size:11.4px;line-height:1;font-weight:400;color:#333;white-space:pre;letter-spacing:0.25px">&lt;Null&gt;</div>
<div style="position:absolute;right:695px;top:392.75px;font-family:'Liberation Sans', sans-serif;font-size:11.4px;line-height:1;font-weight:400;color:#333;white-space:pre;text-align:right;">18</div>
<div style="position:absolute;left:708px;top:392.75px;font-family:'Liberation Sans', sans-serif;font-size:11.4px;line-height:1;font-weight:400;color:#333;white-space:pre;">A</div>
<div style="position:absolute;left:842px;top:392.75px;font-family:'Liberation Sans', sans-serif;font-size:11.4px;line-height:1;font-weight:400;color:#333;white-space:pre;letter-spacing:-0.35px">2024-02-01</div>
<div style="position:absolute;left:36px;top:411px;width:867px;height:22px;background:#ebebeb"></div>
<div style="position:absolute;left:13px;top:411px;width:22px;height:22px;background:#ebebeb"></div>
<div style="position:absolute;left:13px;top:433px;width:890px;height:1px;background:#c8c8c8"></div>
<div style="position:absolute;left:17px;top:416.75px;font-family:'Liberation Sans', sans-serif;font-size:11.4px;line-height:1;font-weight:400;color:#333;white-space:pre;">14</div>
<div style="position:absolute;left:40.5px;top:416.75px;font-family:'Liberation Sans', sans-serif;font-size:11.4px;line-height:1;font-weight:400;color:#333;white-space:pre;">14</div>
<div style="position:absolute;left:102px;top:416.75px;font-family:'Liberation Sans', sans-serif;font-size:11.4px;line-height:1;font-weight:400;color:#333;white-space:pre;letter-spacing:-0.26px">Acer campestre</div>
<div style="position:absolute;left:236px;top:416.75px;font-family:'Liberation Sans', sans-serif;font-size:11.4px;line-height:1;font-weight:400;color:#333;white-space:pre;letter-spacing:0px">Field Maple</div>
<div style="position:absolute;left:371px;top:416.75px;font-family:'Liberation Sans', sans-serif;font-size:11.4px;line-height:1;font-weight:400;color:#333;white-space:pre;letter-spacing:0.2px">higher plants - floweri...</div>
<div style="position:absolute;left:505px;top:416.75px;font-family:'Liberation Sans', sans-serif;font-size:11.4px;line-height:1;font-weight:400;color:#333;white-space:pre;letter-spacing:0.25px">&lt;Null&gt;</div>
<div style="position:absolute;right:695px;top:416.75px;font-family:'Liberation Sans', sans-serif;font-size:11.4px;line-height:1;font-weight:400;color:#333;white-space:pre;text-align:right;">17</div>
<div style="position:absolute;left:708px;top:416.75px;font-family:'Liberation Sans', sans-serif;font-size:11.4px;line-height:1;font-weight:400;color:#333;white-space:pre;">B</div>
<div style="position:absolute;left:842px;top:416.75px;font-family:'Liberation Sans', sans-serif;font-size:11.4px;line-height:1;font-weight:400;color:#333;white-space:pre;letter-spacing:-0.35px">2024-01-01</div>
<div style="position:absolute;left:36px;top:434px;width:867px;height:23px;background:#fff"></div>
<div style="position:absolute;left:13px;top:434px;width:22px;height:23px;background:#ebebeb"></div>
<div style="position:absolute;left:13px;top:457px;width:890px;height:1px;background:#c8c8c8"></div>
<div style="position:absolute;left:17px;top:439.75px;font-family:'Liberation Sans', sans-serif;font-size:11.4px;line-height:1;font-weight:400;color:#333;white-space:pre;">15</div>
<div style="position:absolute;left:40.5px;top:439.75px;font-family:'Liberation Sans', sans-serif;font-size:11.4px;line-height:1;font-weight:400;color:#333;white-space:pre;">15</div>
<div style="position:absolute;left:102px;top:439.75px;font-family:'Liberation Sans', sans-serif;font-size:11.4px;line-height:1;font-weight:400;color:#333;white-space:pre;letter-spacing:-0.26px">Acer campestre</div>
<div style="position:absolute;left:236px;top:439.75px;font-family:'Liberation Sans', sans-serif;font-size:11.4px;line-height:1;font-weight:400;color:#333;white-space:pre;letter-spacing:0px">Field Maple</div>
<div style="position:absolute;left:371px;top:439.75px;font-family:'Liberation Sans', sans-serif;font-size:11.4px;line-height:1;font-weight:400;color:#333;white-space:pre;letter-spacing:0.2px">higher plants - floweri...</div>
<div style="position:absolute;left:505px;top:439.75px;font-family:'Liberation Sans', sans-serif;font-size:11.4px;line-height:1;font-weight:400;color:#333;white-space:pre;letter-spacing:0.25px">&lt;Null&gt;</div>
<div style="position:absolute;right:695px;top:439.75px;font-family:'Liberation Sans', sans-serif;font-size:11.4px;line-height:1;font-weight:400;color:#333;white-space:pre;text-align:right;">16</div>
<div style="position:absolute;left:708px;top:439.75px;font-family:'Liberation Sans', sans-serif;font-size:11.4px;line-height:1;font-weight:400;color:#333;white-space:pre;">C</div>
<div style="position:absolute;left:842px;top:439.75px;font-family:'Liberation Sans', sans-serif;font-size:11.4px;line-height:1;font-weight:400;color:#333;white-space:pre;letter-spacing:-0.35px">2024-04-01</div>
<div style="position:absolute;left:36px;top:458px;width:867px;height:23px;background:#ebebeb"></div>
<div style="position:absolute;left:13px;top:458px;width:22px;height:23px;background:#ebebeb"></div>
<div style="position:absolute;left:13px;top:481px;width:890px;height:1px;background:#c8c8c8"></div>
<div style="position:absolute;left:17px;top:463.75px;font-family:'Liberation Sans', sans-serif;font-size:11.4px;line-height:1;font-weight:400;color:#333;white-space:pre;">16</div>
<div style="position:absolute;left:40.5px;top:463.75px;font-family:'Liberation Sans', sans-serif;font-size:11.4px;line-height:1;font-weight:400;color:#333;white-space:pre;">16</div>
<div style="position:absolute;left:102px;top:463.75px;font-family:'Liberation Sans', sans-serif;font-size:11.4px;line-height:1;font-weight:400;color:#333;white-space:pre;letter-spacing:-0.26px">Acer campestre</div>
<div style="position:absolute;left:236px;top:463.75px;font-family:'Liberation Sans', sans-serif;font-size:11.4px;line-height:1;font-weight:400;color:#333;white-space:pre;letter-spacing:0px">Field Maple</div>
<div style="position:absolute;left:371px;top:463.75px;font-family:'Liberation Sans', sans-serif;font-size:11.4px;line-height:1;font-weight:400;color:#333;white-space:pre;letter-spacing:0.2px">higher plants - floweri...</div>
<div style="position:absolute;left:505px;top:463.75px;font-family:'Liberation Sans', sans-serif;font-size:11.4px;line-height:1;font-weight:400;color:#333;white-space:pre;letter-spacing:0.25px">&lt;Null&gt;</div>
<div style="position:absolute;right:695px;top:463.75px;font-family:'Liberation Sans', sans-serif;font-size:11.4px;line-height:1;font-weight:400;color:#333;white-space:pre;text-align:right;">15</div>
<div style="position:absolute;left:708px;top:463.75px;font-family:'Liberation Sans', sans-serif;font-size:11.4px;line-height:1;font-weight:400;color:#333;white-space:pre;">A</div>
<div style="position:absolute;left:842px;top:463.75px;font-family:'Liberation Sans', sans-serif;font-size:11.4px;line-height:1;font-weight:400;color:#333;white-space:pre;letter-spacing:-0.35px">2024-03-01</div>
<div style="position:absolute;left:36px;top:482px;width:867px;height:22px;background:#fff"></div>
<div style="position:absolute;left:13px;top:482px;width:22px;height:22px;background:#ebebeb"></div>
<div style="position:absolute;left:13px;top:504px;width:890px;height:1px;background:#c8c8c8"></div>
<div style="position:absolute;left:17px;top:487.75px;font-family:'Liberation Sans', sans-serif;font-size:11.4px;line-height:1;font-weight:400;color:#333;white-space:pre;">17</div>
<div style="position:absolute;left:40.5px;top:487.75px;font-family:'Liberation Sans', sans-serif;font-size:11.4px;line-height:1;font-weight:400;color:#333;white-space:pre;">17</div>
<div style="position:absolute;left:102px;top:487.75px;font-family:'Liberation Sans', sans-serif;font-size:11.4px;line-height:1;font-weight:400;color:#333;white-space:pre;letter-spacing:-0.26px">Acer campestre</div>
<div style="position:absolute;left:236px;top:487.75px;font-family:'Liberation Sans', sans-serif;font-size:11.4px;line-height:1;font-weight:400;color:#333;white-space:pre;letter-spacing:0px">Field Maple</div>
<div style="position:absolute;left:371px;top:487.75px;font-family:'Liberation Sans', sans-serif;font-size:11.4px;line-height:1;font-weight:400;color:#333;white-space:pre;letter-spacing:0.2px">higher plants - floweri...</div>
<div style="position:absolute;left:505px;top:487.75px;font-family:'Liberation Sans', sans-serif;font-size:11.4px;line-height:1;font-weight:400;color:#333;white-space:pre;letter-spacing:0.25px">&lt;Null&gt;</div>
<div style="position:absolute;right:695px;top:487.75px;font-family:'Liberation Sans', sans-serif;font-size:11.4px;line-height:1;font-weight:400;color:#333;white-space:pre;text-align:right;">14</div>
<div style="position:absolute;left:708px;top:487.75px;font-family:'Liberation Sans', sans-serif;font-size:11.4px;line-height:1;font-weight:400;color:#333;white-space:pre;">B</div>
<div style="position:absolute;left:842px;top:487.75px;font-family:'Liberation Sans', sans-serif;font-size:11.4px;line-height:1;font-weight:400;color:#333;white-space:pre;letter-spacing:-0.35px">2024-02-01</div>
<div style="position:absolute;left:36px;top:505px;width:867px;height:23px;background:#ebebeb"></div>
<div style="position:absolute;left:13px;top:505px;width:22px;height:23px;background:#ebebeb"></div>
<div style="position:absolute;left:13px;top:528px;width:890px;height:1px;background:#c8c8c8"></div>
<div style="position:absolute;left:17px;top:510.75px;font-family:'Liberation Sans', sans-serif;font-size:11.4px;line-height:1;font-weight:400;color:#333;white-space:pre;">18</div>
<div style="position:absolute;left:40.5px;top:510.75px;font-family:'Liberation Sans', sans-serif;font-size:11.4px;line-height:1;font-weight:400;color:#333;white-space:pre;">18</div>
<div style="position:absolute;left:102px;top:510.75px;font-family:'Liberation Sans', sans-serif;font-size:11.4px;line-height:1;font-weight:400;color:#333;white-space:pre;letter-spacing:-0.26px">Acer campestre</div>
<div style="position:absolute;left:236px;top:510.75px;font-family:'Liberation Sans', sans-serif;font-size:11.4px;line-height:1;font-weight:400;color:#333;white-space:pre;letter-spacing:0px">Field Maple</div>
<div style="position:absolute;left:371px;top:510.75px;font-family:'Liberation Sans', sans-serif;font-size:11.4px;line-height:1;font-weight:400;color:#333;white-space:pre;letter-spacing:0.2px">higher plants - floweri...</div>
<div style="position:absolute;left:505px;top:510.75px;font-family:'Liberation Sans', sans-serif;font-size:11.4px;line-height:1;font-weight:400;color:#333;white-space:pre;letter-spacing:0.25px">&lt;Null&gt;</div>
<div style="position:absolute;right:695px;top:510.75px;font-family:'Liberation Sans', sans-serif;font-size:11.4px;line-height:1;font-weight:400;color:#333;white-space:pre;text-align:right;">13</div>
<div style="position:absolute;left:708px;top:510.75px;font-family:'Liberation Sans', sans-serif;font-size:11.4px;line-height:1;font-weight:400;color:#333;white-space:pre;">C</div>
<div style="position:absolute;left:842px;top:510.75px;font-family:'Liberation Sans', sans-serif;font-size:11.4px;line-height:1;font-weight:400;color:#333;white-space:pre;letter-spacing:-0.35px">2024-01-01</div>
<div style="position:absolute;left:36px;top:529px;width:867px;height:23px;background:#fff"></div>
<div style="position:absolute;left:13px;top:529px;width:22px;height:23px;background:#ebebeb"></div>
<div style="position:absolute;left:13px;top:552px;width:890px;height:1px;background:#c8c8c8"></div>
<div style="position:absolute;left:17px;top:534.75px;font-family:'Liberation Sans', sans-serif;font-size:11.4px;line-height:1;font-weight:400;color:#333;white-space:pre;">19</div>
<div style="position:absolute;left:40.5px;top:534.75px;font-family:'Liberation Sans', sans-serif;font-size:11.4px;line-height:1;font-weight:400;color:#333;white-space:pre;">19</div>
<div style="position:absolute;left:102px;top:534.75px;font-family:'Liberation Sans', sans-serif;font-size:11.4px;line-height:1;font-weight:400;color:#333;white-space:pre;letter-spacing:-0.26px">Acer campestre</div>
<div style="position:absolute;left:236px;top:534.75px;font-family:'Liberation Sans', sans-serif;font-size:11.4px;line-height:1;font-weight:400;color:#333;white-space:pre;letter-spacing:0px">Field Maple</div>
<div style="position:absolute;left:371px;top:534.75px;font-family:'Liberation Sans', sans-serif;font-size:11.4px;line-height:1;font-weight:400;color:#333;white-space:pre;letter-spacing:0.2px">higher plants - floweri...</div>
<div style="position:absolute;left:505px;top:534.75px;font-family:'Liberation Sans', sans-serif;font-size:11.4px;line-height:1;font-weight:400;color:#333;white-space:pre;letter-spacing:0.25px">&lt;Null&gt;</div>
<div style="position:absolute;right:695px;top:534.75px;font-family:'Liberation Sans', sans-serif;font-size:11.4px;line-height:1;font-weight:400;color:#333;white-space:pre;text-align:right;">12</div>
<div style="position:absolute;left:708px;top:534.75px;font-family:'Liberation Sans', sans-serif;font-size:11.4px;line-height:1;font-weight:400;color:#333;white-space:pre;">A</div>
<div style="position:absolute;left:842px;top:534.75px;font-family:'Liberation Sans', sans-serif;font-size:11.4px;line-height:1;font-weight:400;color:#333;white-space:pre;letter-spacing:-0.35px">2024-04-01</div>
<div style="position:absolute;left:36px;top:553px;width:867px;height:22px;background:#ebebeb"></div>
<div style="position:absolute;left:13px;top:553px;width:22px;height:22px;background:#ebebeb"></div>
<div style="position:absolute;left:13px;top:575px;width:890px;height:1px;background:#c8c8c8"></div>
<div style="position:absolute;left:17px;top:558.75px;font-family:'Liberation Sans', sans-serif;font-size:11.4px;line-height:1;font-weight:400;color:#333;white-space:pre;">20</div>
<div style="position:absolute;left:40.5px;top:558.75px;font-family:'Liberation Sans', sans-serif;font-size:11.4px;line-height:1;font-weight:400;color:#333;white-space:pre;">20</div>
<div style="position:absolute;left:102px;top:558.75px;font-family:'Liberation Sans', sans-serif;font-size:11.4px;line-height:1;font-weight:400;color:#333;white-space:pre;letter-spacing:-0.26px">Acer campestre</div>
<div style="position:absolute;left:236px;top:558.75px;font-family:'Liberation Sans', sans-serif;font-size:11.4px;line-height:1;font-weight:400;color:#333;white-space:pre;letter-spacing:0px">Field Maple</div>
<div style="position:absolute;left:371px;top:558.75px;font-family:'Liberation Sans', sans-serif;font-size:11.4px;line-height:1;font-weight:400;color:#333;white-space:pre;letter-spacing:0.2px">higher plants - floweri...</div>
<div style="position:absolute;left:505px;top:558.75px;font-family:'Liberation Sans', sans-serif;font-size:11.4px;line-height:1;font-weight:400;color:#333;white-space:pre;letter-spacing:0.25px">&lt;Null&gt;</div>
<div style="position:absolute;right:695px;top:558.75px;font-family:'Liberation Sans', sans-serif;font-size:11.4px;line-height:1;font-weight:400;color:#333;white-space:pre;text-align:right;">11</div>
<div style="position:absolute;left:708px;top:558.75px;font-family:'Liberation Sans', sans-serif;font-size:11.4px;line-height:1;font-weight:400;color:#333;white-space:pre;">B</div>
<div style="position:absolute;left:842px;top:558.75px;font-family:'Liberation Sans', sans-serif;font-size:11.4px;line-height:1;font-weight:400;color:#333;white-space:pre;letter-spacing:-0.35px">2024-03-01</div>
<div style="position:absolute;left:36px;top:576px;width:867px;height:23px;background:#fff"></div>
<div style="position:absolute;left:13px;top:576px;width:22px;height:23px;background:#ebebeb"></div>
<div style="position:absolute;left:13px;top:599px;width:890px;height:1px;background:#c8c8c8"></div>
<div style="position:absolute;left:17px;top:581.75px;font-family:'Liberation Sans', sans-serif;font-size:11.4px;line-height:1;font-weight:400;color:#333;white-space:pre;">21</div>
<div style="position:absolute;left:40.5px;top:581.75px;font-family:'Liberation Sans', sans-serif;font-size:11.4px;line-height:1;font-weight:400;color:#333;white-space:pre;">21</div>
<div style="position:absolute;left:102px;top:581.75px;font-family:'Liberation Sans', sans-serif;font-size:11.4px;line-height:1;font-weight:400;color:#333;white-space:pre;letter-spacing:-0.26px">Acer campestre</div>
<div style="position:absolute;left:236px;top:581.75px;font-family:'Liberation Sans', sans-serif;font-size:11.4px;line-height:1;font-weight:400;color:#333;white-space:pre;letter-spacing:0px">Field Maple</div>
<div style="position:absolute;left:371px;top:581.75px;font-family:'Liberation Sans', sans-serif;font-size:11.4px;line-height:1;font-weight:400;color:#333;white-space:pre;letter-spacing:0.2px">higher plants - floweri...</div>
<div style="position:absolute;left:505px;top:581.75px;font-family:'Liberation Sans', sans-serif;font-size:11.4px;line-height:1;font-weight:400;color:#333;white-space:pre;letter-spacing:0.25px">&lt;Null&gt;</div>
<div style="position:absolute;right:695px;top:581.75px;font-family:'Liberation Sans', sans-serif;font-size:11.4px;line-height:1;font-weight:400;color:#333;white-space:pre;text-align:right;">10</div>
<div style="position:absolute;left:708px;top:581.75px;font-family:'Liberation Sans', sans-serif;font-size:11.4px;line-height:1;font-weight:400;color:#333;white-space:pre;">C</div>
<div style="position:absolute;left:842px;top:581.75px;font-family:'Liberation Sans', sans-serif;font-size:11.4px;line-height:1;font-weight:400;color:#333;white-space:pre;letter-spacing:-0.35px">2024-02-01</div>
<div style="position:absolute;left:36px;top:600px;width:867px;height:23px;background:#ebebeb"></div>
<div style="position:absolute;left:13px;top:600px;width:22px;height:23px;background:#ebebeb"></div>
<div style="position:absolute;left:13px;top:623px;width:890px;height:1px;background:#c8c8c8"></div>
<div style="position:absolute;left:17px;top:605.75px;font-family:'Liberation Sans', sans-serif;font-size:11.4px;line-height:1;font-weight:400;color:#333;white-space:pre;">22</div>
<div style="position:absolute;left:40.5px;top:605.75px;font-family:'Liberation Sans', sans-serif;font-size:11.4px;line-height:1;font-weight:400;color:#333;white-space:pre;">22</div>
<div style="position:absolute;left:102px;top:605.75px;font-family:'Liberation Sans', sans-serif;font-size:11.4px;line-height:1;font-weight:400;color:#333;white-space:pre;letter-spacing:-0.26px">Acer campestre</div>
<div style="position:absolute;left:236px;top:605.75px;font-family:'Liberation Sans', sans-serif;font-size:11.4px;line-height:1;font-weight:400;color:#333;white-space:pre;letter-spacing:0px">Field Maple</div>
<div style="position:absolute;left:371px;top:605.75px;font-family:'Liberation Sans', sans-serif;font-size:11.4px;line-height:1;font-weight:400;color:#333;white-space:pre;letter-spacing:0.2px">higher plants - floweri...</div>
<div style="position:absolute;left:505px;top:605.75px;font-family:'Liberation Sans', sans-serif;font-size:11.4px;line-height:1;font-weight:400;color:#333;white-space:pre;letter-spacing:0.25px">&lt;Null&gt;</div>
<div style="position:absolute;right:695px;top:605.75px;font-family:'Liberation Sans', sans-serif;font-size:11.4px;line-height:1;font-weight:400;color:#333;white-space:pre;text-align:right;">9</div>
<div style="position:absolute;left:708px;top:605.75px;font-family:'Liberation Sans', sans-serif;font-size:11.4px;line-height:1;font-weight:400;color:#333;white-space:pre;">A</div>
<div style="position:absolute;left:842px;top:605.75px;font-family:'Liberation Sans', sans-serif;font-size:11.4px;line-height:1;font-weight:400;color:#333;white-space:pre;letter-spacing:-0.35px">2024-01-01</div>
<div style="position:absolute;left:36px;top:624px;width:867px;height:22px;background:#fff"></div>
<div style="position:absolute;left:13px;top:624px;width:22px;height:22px;background:#ebebeb"></div>
<div style="position:absolute;left:13px;top:646px;width:890px;height:1px;background:#c8c8c8"></div>
<div style="position:absolute;left:17px;top:629.75px;font-family:'Liberation Sans', sans-serif;font-size:11.4px;line-height:1;font-weight:400;color:#333;white-space:pre;">23</div>
<div style="position:absolute;left:40.5px;top:629.75px;font-family:'Liberation Sans', sans-serif;font-size:11.4px;line-height:1;font-weight:400;color:#333;white-space:pre;">23</div>
<div style="position:absolute;left:102px;top:629.75px;font-family:'Liberation Sans', sans-serif;font-size:11.4px;line-height:1;font-weight:400;color:#333;white-space:pre;letter-spacing:0.07px">Acer pseudoplantus</div>
<div style="position:absolute;left:236px;top:629.75px;font-family:'Liberation Sans', sans-serif;font-size:11.4px;line-height:1;font-weight:400;color:#333;white-space:pre;letter-spacing:-0.5px">Sycamore</div>
<div style="position:absolute;left:371px;top:629.75px;font-family:'Liberation Sans', sans-serif;font-size:11.4px;line-height:1;font-weight:400;color:#333;white-space:pre;letter-spacing:0.2px">higher plants - floweri...</div>
<div style="position:absolute;left:505px;top:629.75px;font-family:'Liberation Sans', sans-serif;font-size:11.4px;line-height:1;font-weight:400;color:#333;white-space:pre;letter-spacing:0.25px">&lt;Null&gt;</div>
<div style="position:absolute;right:695px;top:629.75px;font-family:'Liberation Sans', sans-serif;font-size:11.4px;line-height:1;font-weight:400;color:#333;white-space:pre;text-align:right;">8</div>
<div style="position:absolute;left:708px;top:629.75px;font-family:'Liberation Sans', sans-serif;font-size:11.4px;line-height:1;font-weight:400;color:#333;white-space:pre;">B</div>
<div style="position:absolute;left:842px;top:629.75px;font-family:'Liberation Sans', sans-serif;font-size:11.4px;line-height:1;font-weight:400;color:#333;white-space:pre;letter-spacing:-0.35px">2024-08-01</div>
<div style="position:absolute;left:36px;top:647px;width:867px;height:23px;background:#8dfcfc"></div>
<div style="position:absolute;left:13px;top:647px;width:22px;height:23px;background:#ebebeb"></div>
<div style="position:absolute;left:13px;top:670px;width:890px;height:1px;background:#c8c8c8"></div>
<div style="position:absolute;left:17px;top:652.75px;font-family:'Liberation Sans', sans-serif;font-size:11.4px;line-height:1;font-weight:400;color:#333;white-space:pre;">24</div>
<div style="position:absolute;left:40.5px;top:652.75px;font-family:'Liberation Sans', sans-serif;font-size:11.4px;line-height:1;font-weight:400;color:#333;white-space:pre;">24</div>
<div style="position:absolute;left:102px;top:652.75px;font-family:'Liberation Sans', sans-serif;font-size:11.4px;line-height:1;font-weight:400;color:#333;white-space:pre;letter-spacing:0.07px">Acer pseudoplantus</div>
<div style="position:absolute;left:236px;top:652.75px;font-family:'Liberation Sans', sans-serif;font-size:11.4px;line-height:1;font-weight:400;color:#333;white-space:pre;letter-spacing:-0.5px">Sycamore</div>
<div style="position:absolute;left:371px;top:652.75px;font-family:'Liberation Sans', sans-serif;font-size:11.4px;line-height:1;font-weight:400;color:#333;white-space:pre;letter-spacing:0.2px">higher plants - floweri...</div>
<div style="position:absolute;left:505px;top:652.75px;font-family:'Liberation Sans', sans-serif;font-size:11.4px;line-height:1;font-weight:400;color:#333;white-space:pre;letter-spacing:0.25px">&lt;Null&gt;</div>
<div style="position:absolute;right:695px;top:652.75px;font-family:'Liberation Sans', sans-serif;font-size:11.4px;line-height:1;font-weight:400;color:#333;white-space:pre;text-align:right;">7</div>
<div style="position:absolute;left:708px;top:652.75px;font-family:'Liberation Sans', sans-serif;font-size:11.4px;line-height:1;font-weight:400;color:#333;white-space:pre;">C</div>
<div style="position:absolute;left:842px;top:652.75px;font-family:'Liberation Sans', sans-serif;font-size:11.4px;line-height:1;font-weight:400;color:#333;white-space:pre;letter-spacing:-0.35px">2024-09-01</div>
<div style="position:absolute;left:36px;top:671px;width:867px;height:23px;background:#fff"></div>
<div style="position:absolute;left:13px;top:671px;width:22px;height:23px;background:#ebebeb"></div>
<div style="position:absolute;left:13px;top:694px;width:890px;height:1px;background:#c8c8c8"></div>
<div style="position:absolute;left:17px;top:676.75px;font-family:'Liberation Sans', sans-serif;font-size:11.4px;line-height:1;font-weight:400;color:#333;white-space:pre;">25</div>
<div style="position:absolute;left:40.5px;top:676.75px;font-family:'Liberation Sans', sans-serif;font-size:11.4px;line-height:1;font-weight:400;color:#333;white-space:pre;">25</div>
<div style="position:absolute;left:102px;top:676.75px;font-family:'Liberation Sans', sans-serif;font-size:11.4px;line-height:1;font-weight:400;color:#333;white-space:pre;letter-spacing:0.07px">Acer pseudoplantus</div>
<div style="position:absolute;left:236px;top:676.75px;font-family:'Liberation Sans', sans-serif;font-size:11.4px;line-height:1;font-weight:400;color:#333;white-space:pre;letter-spacing:-0.5px">Sycamore</div>
<div style="position:absolute;left:371px;top:676.75px;font-family:'Liberation Sans', sans-serif;font-size:11.4px;line-height:1;font-weight:400;color:#333;white-space:pre;letter-spacing:0.2px">higher plants - floweri...</div>
<div style="position:absolute;left:505px;top:676.75px;font-family:'Liberation Sans', sans-serif;font-size:11.4px;line-height:1;font-weight:400;color:#333;white-space:pre;letter-spacing:0.25px">&lt;Null&gt;</div>
<div style="position:absolute;right:695px;top:676.75px;font-family:'Liberation Sans', sans-serif;font-size:11.4px;line-height:1;font-weight:400;color:#333;white-space:pre;text-align:right;">6</div>
<div style="position:absolute;left:708px;top:676.75px;font-family:'Liberation Sans', sans-serif;font-size:11.4px;line-height:1;font-weight:400;color:#333;white-space:pre;">A</div>
<div style="position:absolute;left:842px;top:676.75px;font-family:'Liberation Sans', sans-serif;font-size:11.4px;line-height:1;font-weight:400;color:#333;white-space:pre;letter-spacing:-0.35px">2024-08-01</div>
<div style="position:absolute;left:36px;top:695px;width:867px;height:22px;background:#ebebeb"></div>
<div style="position:absolute;left:13px;top:695px;width:22px;height:22px;background:#ebebeb"></div>
<div style="position:absolute;left:13px;top:717px;width:890px;height:1px;background:#c8c8c8"></div>
<div style="position:absolute;left:17px;top:700.75px;font-family:'Liberation Sans', sans-serif;font-size:11.4px;line-height:1;font-weight:400;color:#333;white-space:pre;">26</div>
<div style="position:absolute;left:40.5px;top:700.75px;font-family:'Liberation Sans', sans-serif;font-size:11.4px;line-height:1;font-weight:400;color:#333;white-space:pre;">26</div>
<div style="position:absolute;left:102px;top:700.75px;font-family:'Liberation Sans', sans-serif;font-size:11.4px;line-height:1;font-weight:400;color:#333;white-space:pre;letter-spacing:0.07px">Acer pseudoplantus</div>
<div style="position:absolute;left:236px;top:700.75px;font-family:'Liberation Sans', sans-serif;font-size:11.4px;line-height:1;font-weight:400;color:#333;white-space:pre;letter-spacing:-0.5px">Sycamore</div>
<div style="position:absolute;left:371px;top:700.75px;font-family:'Liberation Sans', sans-serif;font-size:11.4px;line-height:1;font-weight:400;color:#333;white-space:pre;letter-spacing:0.2px">higher plants - floweri...</div>
<div style="position:absolute;left:505px;top:700.75px;font-family:'Liberation Sans', sans-serif;font-size:11.4px;line-height:1;font-weight:400;color:#333;white-space:pre;letter-spacing:0.25px">&lt;Null&gt;</div>
<div style="position:absolute;right:695px;top:700.75px;font-family:'Liberation Sans', sans-serif;font-size:11.4px;line-height:1;font-weight:400;color:#333;white-space:pre;text-align:right;">5</div>
<div style="position:absolute;left:708px;top:700.75px;font-family:'Liberation Sans', sans-serif;font-size:11.4px;line-height:1;font-weight:400;color:#333;white-space:pre;">B</div>
<div style="position:absolute;left:842px;top:700.75px;font-family:'Liberation Sans', sans-serif;font-size:11.4px;line-height:1;font-weight:400;color:#333;white-space:pre;letter-spacing:-0.35px">2024-09-01</div>
<div style="position:absolute;left:36px;top:718px;width:867px;height:23px;background:#fff"></div>
<div style="position:absolute;left:13px;top:718px;width:22px;height:23px;background:#ebebeb"></div>
<div style="position:absolute;left:13px;top:741px;width:890px;height:1px;background:#c8c8c8"></div>
<div style="position:absolute;left:17px;top:723.75px;font-family:'Liberation Sans', sans-serif;font-size:11.4px;line-height:1;font-weight:400;color:#333;white-space:pre;">27</div>
<div style="position:absolute;left:40.5px;top:723.75px;font-family:'Liberation Sans', sans-serif;font-size:11.4px;line-height:1;font-weight:400;color:#333;white-space:pre;">27</div>
<div style="position:absolute;left:102px;top:723.75px;font-family:'Liberation Sans', sans-serif;font-size:11.4px;line-height:1;font-weight:400;color:#333;white-space:pre;letter-spacing:0.07px">Acer pseudoplantus</div>
<div style="position:absolute;left:236px;top:723.75px;font-family:'Liberation Sans', sans-serif;font-size:11.4px;line-height:1;font-weight:400;color:#333;white-space:pre;letter-spacing:-0.5px">Sycamore</div>
<div style="position:absolute;left:371px;top:723.75px;font-family:'Liberation Sans', sans-serif;font-size:11.4px;line-height:1;font-weight:400;color:#333;white-space:pre;letter-spacing:0.2px">higher plants - floweri...</div>
<div style="position:absolute;left:505px;top:723.75px;font-family:'Liberation Sans', sans-serif;font-size:11.4px;line-height:1;font-weight:400;color:#333;white-space:pre;letter-spacing:0.25px">&lt;Null&gt;</div>
<div style="position:absolute;right:695px;top:723.75px;font-family:'Liberation Sans', sans-serif;font-size:11.4px;line-height:1;font-weight:400;color:#333;white-space:pre;text-align:right;">4</div>
<div style="position:absolute;left:708px;top:723.75px;font-family:'Liberation Sans', sans-serif;font-size:11.4px;line-height:1;font-weight:400;color:#333;white-space:pre;">C</div>
<div style="position:absolute;left:842px;top:723.75px;font-family:'Liberation Sans', sans-serif;font-size:11.4px;line-height:1;font-weight:400;color:#333;white-space:pre;letter-spacing:-0.35px">2024-08-01</div>
<div style="position:absolute;left:36px;top:742px;width:867px;height:23px;background:#ebebeb"></div>
<div style="position:absolute;left:13px;top:742px;width:22px;height:23px;background:#ebebeb"></div>
<div style="position:absolute;left:13px;top:765px;width:890px;height:1px;background:#c8c8c8"></div>
<div style="position:absolute;left:17px;top:747.75px;font-family:'Liberation Sans', sans-serif;font-size:11.4px;line-height:1;font-weight:400;color:#333;white-space:pre;">28</div>
<div style="position:absolute;left:40.5px;top:747.75px;font-family:'Liberation Sans', sans-serif;font-size:11.4px;line-height:1;font-weight:400;color:#333;white-space:pre;">28</div>
<div style="position:absolute;left:102px;top:747.75px;font-family:'Liberation Sans', sans-serif;font-size:11.4px;line-height:1;font-weight:400;color:#333;white-space:pre;letter-spacing:0.07px">Acer pseudoplantus</div>
<div style="position:absolute;left:236px;top:747.75px;font-family:'Liberation Sans', sans-serif;font-size:11.4px;line-height:1;font-weight:400;color:#333;white-space:pre;letter-spacing:-0.5px">Sycamore</div>
<div style="position:absolute;left:371px;top:747.75px;font-family:'Liberation Sans', sans-serif;font-size:11.4px;line-height:1;font-weight:400;color:#333;white-space:pre;letter-spacing:0.2px">higher plants - floweri...</div>
<div style="position:absolute;left:505px;top:747.75px;font-family:'Liberation Sans', sans-serif;font-size:11.4px;line-height:1;font-weight:400;color:#333;white-space:pre;letter-spacing:0.25px">&lt;Null&gt;</div>
<div style="position:absolute;right:695px;top:747.75px;font-family:'Liberation Sans', sans-serif;font-size:11.4px;line-height:1;font-weight:400;color:#333;white-space:pre;text-align:right;">3</div>
<div style="position:absolute;left:708px;top:747.75px;font-family:'Liberation Sans', sans-serif;font-size:11.4px;line-height:1;font-weight:400;color:#333;white-space:pre;">A</div>
<div style="position:absolute;left:842px;top:747.75px;font-family:'Liberation Sans', sans-serif;font-size:11.4px;line-height:1;font-weight:400;color:#333;white-space:pre;letter-spacing:-0.35px">2024-09-01</div>
<div style="position:absolute;left:36px;top:766px;width:867px;height:22px;background:#fff"></div>
<div style="position:absolute;left:13px;top:766px;width:22px;height:22px;background:#ebebeb"></div>
<div style="position:absolute;left:13px;top:788px;width:890px;height:1px;background:#c8c8c8"></div>
<div style="position:absolute;left:17px;top:771.75px;font-family:'Liberation Sans', sans-serif;font-size:11.4px;line-height:1;font-weight:400;color:#333;white-space:pre;">29</div>
<div style="position:absolute;left:40.5px;top:771.75px;font-family:'Liberation Sans', sans-serif;font-size:11.4px;line-height:1;font-weight:400;color:#333;white-space:pre;">29</div>
<div style="position:absolute;left:102px;top:771.75px;font-family:'Liberation Sans', sans-serif;font-size:11.4px;line-height:1;font-weight:400;color:#333;white-space:pre;letter-spacing:0.07px">Acer pseudoplantus</div>
<div style="position:absolute;left:236px;top:771.75px;font-family:'Liberation Sans', sans-serif;font-size:11.4px;line-height:1;font-weight:400;color:#333;white-space:pre;letter-spacing:-0.5px">Sycamore</div>
<div style="position:absolute;left:371px;top:771.75px;font-family:'Liberation Sans', sans-serif;font-size:11.4px;line-height:1;font-weight:400;color:#333;white-space:pre;letter-spacing:0.2px">higher plants - floweri...</div>
<div style="position:absolute;left:505px;top:771.75px;font-family:'Liberation Sans', sans-serif;font-size:11.4px;line-height:1;font-weight:400;color:#333;white-space:pre;letter-spacing:0.25px">&lt;Null&gt;</div>
<div style="position:absolute;right:695px;top:771.75px;font-family:'Liberation Sans', sans-serif;font-size:11.4px;line-height:1;font-weight:400;color:#333;white-space:pre;text-align:right;">2</div>
<div style="position:absolute;left:708px;top:771.75px;font-family:'Liberation Sans', sans-serif;font-size:11.4px;line-height:1;font-weight:400;color:#333;white-space:pre;">B</div>
<div style="position:absolute;left:842px;top:771.75px;font-family:'Liberation Sans', sans-serif;font-size:11.4px;line-height:1;font-weight:400;color:#333;white-space:pre;letter-spacing:-0.35px">2024-08-01</div>
<div style="position:absolute;left:36px;top:789px;width:867px;height:23px;background:#ebebeb"></div>
<div style="position:absolute;left:13px;top:789px;width:22px;height:23px;background:#ebebeb"></div>
<div style="position:absolute;left:13px;top:812px;width:890px;height:1px;background:#c8c8c8"></div>
<div style="position:absolute;left:17px;top:794.75px;font-family:'Liberation Sans', sans-serif;font-size:11.4px;line-height:1;font-weight:400;color:#333;white-space:pre;">30</div>
<div style="position:absolute;left:40.5px;top:794.75px;font-family:'Liberation Sans', sans-serif;font-size:11.4px;line-height:1;font-weight:400;color:#333;white-space:pre;">30</div>
<div style="position:absolute;left:102px;top:794.75px;font-family:'Liberation Sans', sans-serif;font-size:11.4px;line-height:1;font-weight:400;color:#333;white-space:pre;letter-spacing:0.07px">Acer pseudoplantus</div>
<div style="position:absolute;left:236px;top:794.75px;font-family:'Liberation Sans', sans-serif;font-size:11.4px;line-height:1;font-weight:400;color:#333;white-space:pre;letter-spacing:-0.5px">Sycamore</div>
<div style="position:absolute;left:371px;top:794.75px;font-family:'Liberation Sans', sans-serif;font-size:11.4px;line-height:1;font-weight:400;color:#333;white-space:pre;letter-spacing:0.2px">higher plants - floweri...</div>
<div style="position:absolute;left:505px;top:794.75px;font-family:'Liberation Sans', sans-serif;font-size:11.4px;line-height:1;font-weight:400;color:#333;white-space:pre;letter-spacing:0.25px">&lt;Null&gt;</div>
<div style="position:absolute;right:695px;top:794.75px;font-family:'Liberation Sans', sans-serif;font-size:11.4px;line-height:1;font-weight:400;color:#333;white-space:pre;text-align:right;">1</div>
<div style="position:absolute;left:708px;top:794.75px;font-family:'Liberation Sans', sans-serif;font-size:11.4px;line-height:1;font-weight:400;color:#333;white-space:pre;">C</div>
<div style="position:absolute;left:842px;top:794.75px;font-family:'Liberation Sans', sans-serif;font-size:11.4px;line-height:1;font-weight:400;color:#333;white-space:pre;letter-spacing:-0.35px">2024-09-01</div>
<div style="position:absolute;left:35px;top:65px;width:1px;height:747px;background:#c8c8c8"></div>
<div style="position:absolute;left:97px;top:65px;width:1px;height:747px;background:#c8c8c8"></div>
<div style="position:absolute;left:231px;top:65px;width:1px;height:747px;background:#c8c8c8"></div>
<div style="position:absolute;left:365px;top:65px;width:2px;height:747px;background:#c8c8c8"></div>
<div style="position:absolute;left:500px;top:65px;width:1px;height:747px;background:#c8c8c8"></div>
<div style="position:absolute;left:634px;top:65px;width:2px;height:747px;background:#c8c8c8"></div>
<div style="position:absolute;left:703px;top:65px;width:1px;height:747px;background:#c8c8c8"></div>
<div style="position:absolute;left:837px;top:65px;width:1px;height:747px;background:#c8c8c8"></div>
<div style="position:absolute;left:902px;top:103px;width:1px;height:709px;background:#c8c8c8"></div>
<div style="position:absolute;left:13px;top:813px;width:22px;height:23px;background:#ebebeb"></div>
<div style="position:absolute;left:40.2px;top:819.08px;font-family:'Liberation Sans', sans-serif;font-size:11.6px;line-height:1;font-weight:400;color:#333;white-space:pre;letter-spacing:0.095px">Click to add new row.</div>
<div style="position:absolute;left:13px;top:836px;width:1381px;height:17px;background:#f3f3f3"></div>
<svg style="position:absolute;left:19px;top:840px" width="6" height="9" viewBox="0 0 6 9"><path d="M4.5 0.8 L1.2 4.5 L4.5 8.2" stroke="#c4c4c4" stroke-width="1.1" fill="none"/></svg>
<div style="position:absolute;left:12px;top:853px;width:1382px;height:1px;background:#c8c8c8"></div>
<div style="position:absolute;left:12px;top:854px;width:1382px;height:26px;background:#f5f6f6"></div>
<div style="position:absolute;left:12px;top:857px;width:30px;height:20px;background:#c5c6c9;border:1px solid #2da7ef"></div>
<svg style="position:absolute;left:20px;top:861px" width="15" height="13" viewBox="0 0 15 13"><rect x="0.7" y="0.7" width="13.6" height="11.8" fill="#fff" stroke="#555" stroke-width="1.3"/><rect x="1.3" y="4" width="12.4" height="2.2" fill="#b3eff9"/><rect x="1.3" y="9.7" width="12.4" height="2.2" fill="#b3eff9"/><path d="M1 3.6 H14 M1 6.6 H14 M1 9.4 H14" stroke="#555" stroke-width="1"/></svg>
<svg style="position:absolute;left:54px;top:861px" width="15" height="10" viewBox="0 0 15 10"><rect x="0.7" y="0.7" width="13.6" height="8.8" fill="#b3eff9" stroke="#555" stroke-width="1.3"/><path d="M1 3.6 H14 M1 6.6 H14" stroke="#555" stroke-width="1"/></svg>
<svg style="position:absolute;left:87px;top:863px" width="10" height="10" viewBox="0 0 10 10"><path d="M1 0.5 V9.5" stroke="#c3c3c3" stroke-width="1.2"/><path d="M9.5 0.5 L2.8 5 L9.5 9.5 Z" fill="#c8c8c8"/></svg>
<svg style="position:absolute;left:109px;top:863px" width="10" height="10" viewBox="0 0 10 10"><path d="M9 0.5 V9.5" stroke="#555" stroke-width="1.2"/><path d="M0.5 0.5 L7.2 5 L0.5 9.5 Z" fill="#555"/></svg>
<div style="position:absolute;left:131.7px;top:862.81px;font-family:'Liberation Sans', sans-serif;font-size:11.8px;line-height:1;font-weight:400;color:#333;white-space:pre;letter-spacing:-0.161px">3 of 30 selected</div>
<div style="position:absolute;left:1060.0px;top:862.61px;font-family:'Liberation Sans', sans-serif;font-size:11.8px;line-height:1;font-weight:400;color:#333;white-space:pre;letter-spacing:-0.186px">Filters:</div>
<div style="position:absolute;left:1099px;top:856px;width:63px;height:23px;background:#eff0f1"></div>
<svg style="position:absolute;left:1103px;top:859px" width="16" height="16" viewBox="0 0 16 16"><circle cx="8" cy="8" r="7" fill="#e9eff3" stroke="#cfcfcf" stroke-width="1"/><path d="M9 12 A5 5 0 0 0 12.5 6 L8 9 Z" fill="#dfe9dc"/><path d="M7.8 3.8 V8.6 H11" stroke="#c4c4c4" stroke-width="1.2" fill="none"/></svg>
<svg style="position:absolute;left:1124px;top:859px" width="16" height="16" viewBox="0 0 16 16"><path d="M9 1.2 A7 7 0 1 1 2 9" fill="#e9eff3" stroke="#cfcfcf" stroke-width="1"/><path d="M6 12 A5 5 0 0 0 14 7 L9 8 Z" fill="#dfe9dc"/><path d="M1.5 0.5 V7 M4.5 0.5 V7 M7.5 0.5 V7" stroke="#c8c8c8" stroke-width="0.9"/><path d="M0.5 4.5 H2.8 M3.5 2 H5.7 M6.5 4.5 H8.8" stroke="#9fcbea" stroke-width="1.1"/></svg>
<svg style="position:absolute;left:1145px;top:859px" width="17" height="17" viewBox="0 0 17 17"><path d="M0.8 1 H13.2 V2.5 L8 9 V15.5 L6 15.5 V9 L0.8 2.5 Z" fill="#e0e0e0" stroke="#c6c6c6" stroke-width="0.9"/><path d="M8.5 9.5 h1.6 M11.5 9.5 h1.6 M14.5 9.5 h1.6 M8.5 12.5 h1.6 M14.5 12.5 h1.6 M8.5 15.5 h1.6 M11.5 15.5 h1.6 M14.5 15.5 h1.6" stroke="#a9d1ee" stroke-width="1.5"/></svg>
<div style="position:absolute;left:1163px;top:860px;width:1px;height:15px;background:#555"></div>
<svg style="position:absolute;left:1170px;top:859px" width="11" height="17" viewBox="0 0 11 17"><path d="M5.5 2 V8.5" stroke="#86bf8c" stroke-width="2"/><path d="M1.3 6 L5.5 1.5 L9.7 6" stroke="#86bf8c" stroke-width="2" fill="none"/><path d="M5.5 8.5 V15" stroke="#f3c08e" stroke-width="2"/><path d="M1.3 11 L5.5 15.5 L9.7 11" stroke="#f3c08e" stroke-width="2" fill="none"/></svg>
<div style="position:absolute;left:1195px;top:867px;width:6px;height:2px;background:#666"></div>
<div style="position:absolute;left:1209px;top:866px;width:100px;height:3px;background:#dadada"></div>
<div style="position:absolute;left:1209px;top:866px;width:49px;height:3px;background:#6b6b6b"></div>
<div style="position:absolute;left:1257px;top:862px;width:3px;height:11px;background:#6b6b6b"></div>
<div style="position:absolute;left:1316px;top:867px;width:9px;height:2px;background:#555"></div>
<div style="position:absolute;left:1319.5px;top:863.5px;width:2px;height:9px;background:#555"></div>
<div style="position:absolute;left:1331px;top:857px;width:63px;height:22px;background:#fff"></div>
<div style="position:absolute;left:1337px;top:862.95px;font-family:'Liberation Sans', sans-serif;font-size:11.4px;line-height:1;font-weight:400;color:#333;white-space:pre;letter-spacing:-0.2px">100%</div>
<svg style="position:absolute;left:1380px;top:865px" width="7" height="4" viewBox="0 0 7 4"><path d="M0 0 H6 L3 3.5 Z" fill="#555"/></svg>
<div style="position:absolute;left:904px;top:63px;width:482px;height:458px;background:#f5f7f7;border:1px solid #1375c6;box-shadow:0 1px 12px rgba(0,0,0,0.28)"></div>
<div style="position:absolute;left:913.0px;top:69.66px;font-family:'Liberation Sans', sans-serif;font-size:14.7px;line-height:1;font-weight:400;color:#1b77c4;white-space:pre;letter-spacing:0.018px">Select By Attributes</div>
<svg style="position:absolute;left:1338px;top:70px" width="10" height="12" viewBox="0 0 10 12"><path d="M1.6 3.4 Q1.8 1 4.6 1 Q7.6 1 7.6 3.6 Q7.6 5.2 5.8 6.2 Q4.6 7 4.6 8.6" stroke="#787878" stroke-width="1.6" fill="none"/><circle cx="4.6" cy="10.6" r="0.95" fill="#787878"/></svg>
<svg style="position:absolute;left:1368px;top:72px" width="10" height="9" viewBox="0 0 10 9"><path d="M0.7 0.5 L9.3 8.5 M9.3 0.5 L0.7 8.5" stroke="#707070" stroke-width="1.3"/></svg>
<div style="position:absolute;left:923.4px;top:103.00px;font-family:'Liberation Sans', sans-serif;font-size:11.7px;line-height:1;font-weight:400;color:#333;white-space:pre;letter-spacing:-0.069px">Input Rows</div>
<div style="position:absolute;left:923px;top:116px;width:428px;height:20px;background:#fff;border:1px solid #8c8c8c"></div>
<div style="position:absolute;left:928.3px;top:121.61px;font-family:'Liberation Sans', sans-serif;font-size:11.8px;line-height:1;font-weight:400;color:#1e1e1e;white-space:pre;letter-spacing:-0.301px">species_records</div>
<svg style="position:absolute;left:1341px;top:125px" width="7" height="5" viewBox="0 0 7 5"><path d="M0.6 0.6 L3.3 3.6 L6 0.6" stroke="#555" stroke-width="1.1" fill="none"/></svg>
<svg style="position:absolute;left:1359px;top:120px" width="18" height="14" viewBox="0 0 18 14"><path d="M1.5 13 V2.2 Q1.5 1.2 2.5 1.2 H6 L7.3 2.5 H13 Q13.8 2.5 13.8 3.3 V5" fill="#fff4c6" stroke="#d8c24a" stroke-width="1.2"/><path d="M1 13.3 L4 5.3 H17 L14 13.3 Z" fill="#d9c34c"/></svg>
<div style="position:absolute;left:923.2px;top:145.30px;font-family:'Liberation Sans', sans-serif;font-size:11.7px;line-height:1;font-weight:400;color:#333;white-space:pre;letter-spacing:-0.057px">Selection Type</div>
<div style="position:absolute;left:923px;top:158px;width:454px;height:20px;background:#fff;border:1px solid #8c8c8c"></div>
<div style="position:absolute;left:928.7px;top:164.41px;font-family:'Liberation Sans', sans-serif;font-size:11.8px;line-height:1;font-weight:400;color:#1e1e1e;white-space:pre;letter-spacing:-0.030px">New selection</div>
<svg style="position:absolute;left:1367px;top:167px" width="7" height="5" viewBox="0 0 7 5"><path d="M0.6 0.6 L3.3 3.6 L6 0.6" stroke="#555" stroke-width="1.1" fill="none"/></svg>
<div style="position:absolute;left:923.6px;top:187.60px;font-family:'Liberation Sans', sans-serif;font-size:11.7px;line-height:1;font-weight:400;color:#333;white-space:pre;letter-spacing:-0.287px">Expression</div>
<svg style="position:absolute;left:923px;top:210px" width="18" height="14" viewBox="0 0 18 14"><path d="M1.5 13 V2.2 Q1.5 1.2 2.5 1.2 H6 L7.3 2.5 H13 Q13.8 2.5 13.8 3.3 V5" fill="#fff4c6" stroke="#d8c24a" stroke-width="1.2"/><path d="M1 13.3 L4 5.3 H17 L14 13.3 Z" fill="#d9c34c"/></svg>
<div style="position:absolute;left:945.2px;top:212.24px;font-family:'Liberation Sans', sans-serif;font-size:12px;line-height:1;font-weight:400;color:#333;white-space:pre;letter-spacing:-0.433px">Load</div>
<svg style="position:absolute;left:989px;top:210px" width="14" height="14" viewBox="0 0 14 14"><path d="M0 1.5 Q0 0 1.5 0 H11.5 L14 2.5 V12.5 Q14 14 12.5 14 H1.5 Q0 14 0 12.5 Z" fill="#8c78be"/><rect x="3" y="1" width="8" height="4.5" fill="#8c78be"/><rect x="3" y="8" width="8" height="6" fill="#f5f7f7"/><rect x="4.5" y="9.5" width="5" height="4.5" fill="#666"/><rect x="6.5" y="9.5" width="2" height="3" fill="#f5f7f7"/></svg>
<div style="position:absolute;left:1009.0px;top:212.24px;font-family:'Liberation Sans', sans-serif;font-size:12px;line-height:1;font-weight:400;color:#333;white-space:pre;letter-spacing:-1.116px">Save</div>
<svg style="position:absolute;left:1052px;top:212px" width="12" height="11" viewBox="0 0 12 11"><path d="M1 0.8 L10.5 10.2 M10.5 0.8 L1 10.2" stroke="#d0654a" stroke-width="1.6"/></svg>
<div style="position:absolute;left:1071.9px;top:212.24px;font-family:'Liberation Sans', sans-serif;font-size:12px;line-height:1;font-weight:400;color:#333;white-space:pre;letter-spacing:-0.578px">Remove</div>
<svg style="position:absolute;left:925px;top:245px" width="12" height="10" viewBox="0 0 12 10"><path d="M1 5 L4.2 8.5 L11 1.2" stroke="#5aa55a" stroke-width="1.6" fill="none"/></svg>
<div style="position:absolute;left:1299px;top:246.75px;font-family:'Liberation Sans', sans-serif;font-size:11.4px;line-height:1;font-weight:400;color:#333;white-space:pre;letter-spacing:-0.3px">SQL</div>
<svg style="position:absolute;left:1324px;top:244px" width="27" height="14" viewBox="0 0 27 14"><rect x="0" y="0" width="26.5" height="14" rx="7" fill="#0a74c4"/><circle cx="19.5" cy="7" r="5.9" fill="#fff" stroke="#3a8fd3" stroke-width="0.9"/></svg>
<svg style="position:absolute;left:1358.5px;top:242.5px" width="17" height="17" viewBox="0 0 17 17"><line x1="13.50" y1="8.50" x2="15.70" y2="8.50" stroke="#777" stroke-width="2" stroke-linecap="round"/><line x1="12.04" y1="12.04" x2="13.59" y2="13.59" stroke="#777" stroke-width="2" stroke-linecap="round"/><line x1="8.50" y1="13.50" x2="8.50" y2="15.70" stroke="#777" stroke-width="2" stroke-linecap="round"/><line x1="4.96" y1="12.04" x2="3.41" y2="13.59" stroke="#777" stroke-width="2" stroke-linecap="round"/><line x1="3.50" y1="8.50" x2="1.30" y2="8.50" stroke="#777" stroke-width="2" stroke-linecap="round"/><line x1="4.96" y1="4.96" x2="3.41" y2="3.41" stroke="#777" stroke-width="2" stroke-linecap="round"/><line x1="8.50" y1="3.50" x2="8.50" y2="1.30" stroke="#777" stroke-width="2" stroke-linecap="round"/><line x1="12.04" y1="4.96" x2="13.59" y2="3.41" stroke="#777" stroke-width="2" stroke-linecap="round"/><circle cx="8.5" cy="8.5" r="5" fill="#d8d8d8" stroke="#777" stroke-width="1.4"/><circle cx="8.5" cy="8.5" r="2.3" fill="#f5f7f7" stroke="#777" stroke-width="1.2"/></svg>
<div style="position:absolute;left:923px;top:268px;width:454px;height:119px;background:#fff;border:1px solid #8c8c8c"></div>
<div style="position:absolute;left:924px;top:269px;width:27px;height:119px;background:#f3f3f3"></div>
<div style="position:absolute;left:1361px;top:269px;width:17px;height:119px;background:#ededed"></div>
<svg style="position:absolute;left:1366px;top:274px" width="8" height="5" viewBox="0 0 8 5"><path d="M0.6 4.4 L3.8 1 L7 4.4" stroke="#606060" stroke-width="1" fill="none"/></svg>
<div style="position:absolute;left:1365px;top:288px;width:9px;height:33px;background:#b5b5b5;border-radius:4.5px"></div>
<svg style="position:absolute;left:1366px;top:377px" width="8" height="5" viewBox="0 0 8 5"><path d="M0.6 0.6 L3.8 4 L7 0.6" stroke="#606060" stroke-width="1" fill="none"/></svg>
<div style="position:absolute;right:445px;top:273.17px;font-family:'Liberation Mono', monospace;font-size:11px;line-height:1;font-weight:400;color:#2b79c2;white-space:pre;text-align:right;">1</div>
<div style="position:absolute;left:952.3px;top:273.17px;font-family:'Liberation Mono', monospace;font-size:11px;line-height:1;font-weight:400;color:#111;white-space:pre;letter-spacing:-0.05px">    <span style="color:#3c3c3c">species_records.</span><span style="color:#111">objectid</span> <span style="color:#1a76d2">IN (</span></div>
<div style="position:absolute;right:445px;top:290.07px;font-family:'Liberation Mono', monospace;font-size:11px;line-height:1;font-weight:400;color:#2b79c2;white-space:pre;text-align:right;">2</div>
<div style="position:absolute;left:952.3px;top:290.07px;font-family:'Liberation Mono', monospace;font-size:11px;line-height:1;font-weight:400;color:#111;white-space:pre;letter-spacing:-0.05px">             <span style="color:#1a76d2">SELECT</span> <span style="color:#111">objectid</span></div>
<div style="position:absolute;right:445px;top:306.97px;font-family:'Liberation Mono', monospace;font-size:11px;line-height:1;font-weight:400;color:#2b79c2;white-space:pre;text-align:right;">3</div>
<div style="position:absolute;left:952.3px;top:306.97px;font-family:'Liberation Mono', monospace;font-size:11px;line-height:1;font-weight:400;color:#111;white-space:pre;letter-spacing:-0.05px">               <span style="color:#1a76d2">FROM</span> <span style="color:#3c3c3c">species_records r2</span></div>
<div style="position:absolute;right:445px;top:323.87px;font-family:'Liberation Mono', monospace;font-size:11px;line-height:1;font-weight:400;color:#2b79c2;white-space:pre;text-align:right;">4</div>
<div style="position:absolute;left:952.3px;top:323.87px;font-family:'Liberation Mono', monospace;font-size:11px;line-height:1;font-weight:400;color:#111;white-space:pre;letter-spacing:-0.05px">              <span style="color:#1a76d2">WHERE</span> <span style="color:#3c3c3c">r2.</span><span style="color:#111">t_species</span><span style="color:#3c3c3c"> = species_records.</span><span style="color:#111">t_species</span></div>
<div style="position:absolute;right:445px;top:340.77px;font-family:'Liberation Mono', monospace;font-size:11px;line-height:1;font-weight:400;color:#2b79c2;white-space:pre;text-align:right;">5</div>
<div style="position:absolute;left:952.3px;top:340.77px;font-family:'Liberation Mono', monospace;font-size:11px;line-height:1;font-weight:400;color:#111;white-space:pre;letter-spacing:-0.05px">           <span style="color:#1a76d2">ORDER BY</span> <span style="color:#111">T_date</span> <span style="color:#1a76d2">DESC</span>  <span style="color:#2a9a96">--, priority ASC</span></div>
<div style="position:absolute;right:445px;top:357.67px;font-family:'Liberation Mono', monospace;font-size:11px;line-height:1;font-weight:400;color:#2b79c2;white-space:pre;text-align:right;">6</div>
<div style="position:absolute;left:952.3px;top:357.67px;font-family:'Liberation Mono', monospace;font-size:11px;line-height:1;font-weight:400;color:#111;white-space:pre;letter-spacing:-0.05px">              <span style="color:#1a76d2">LIMIT</span> <span style="color:#8b0000">1</span></div>
<div style="position:absolute;right:445px;top:374.57px;font-family:'Liberation Mono', monospace;font-size:11px;line-height:1;font-weight:400;color:#2b79c2;white-space:pre;text-align:right;">7</div>
<div style="position:absolute;left:952.3px;top:374.57px;font-family:'Liberation Mono', monospace;font-size:11px;line-height:1;font-weight:400;color:#111;white-space:pre;letter-spacing:-0.05px">                    <span style="color:#1a76d2">)</span></div>
<svg style="position:absolute;left:931px;top:394px" width="16" height="15" viewBox="0 0 16 15"><path d="M8 1 L15.2 14 H0.8 Z" fill="#f7c38f" stroke="#e9a86a" stroke-width="1" stroke-linejoin="round"/><path d="M8 5 V10" stroke="#333" stroke-width="1.6"/><rect x="7.2" y="11.2" width="1.6" height="1.6" fill="#333"/></svg>
<div style="position:absolute;left:955.2px;top:396.87px;font-family:'Liberation Sans', sans-serif;font-size:12.2px;line-height:1;font-weight:400;color:#977f22;white-space:pre;letter-spacing:-0.209px">The expression can't be edited in Clause mode.</div>
<div style="position:absolute;left:923px;top:433px;width:12px;height:12px;background:#fff;border:1px solid #7a7a7a;border-radius:2px"></div>
<div style="position:absolute;left:943.4px;top:435.20px;font-family:'Liberation Sans', sans-serif;font-size:11.7px;line-height:1;font-weight:400;color:#333;white-space:pre;letter-spacing:-0.069px">Invert Where Clause</div>
<div style="position:absolute;left:1229px;top:489px;width:68px;height:22px;background:#fff;border:1px solid #3a8ad6"></div>
<div style="position:absolute;left:1248.7px;top:496.19px;font-family:'Liberation Sans', sans-serif;font-size:12.3px;line-height:1;font-weight:400;color:#333;white-space:pre;letter-spacing:-0.041px">Apply</div>
<div style="position:absolute;left:1308px;top:489px;width:68px;height:22px;background:#fff;border:1px solid #555"></div>
<div style="position:absolute;left:1334.8px;top:496.19px;font-family:'Liberation Sans', sans-serif;font-size:12.3px;line-height:1;font-weight:400;color:#333;white-space:pre;letter-spacing:-1.474px">OK</div>
</body></html>
